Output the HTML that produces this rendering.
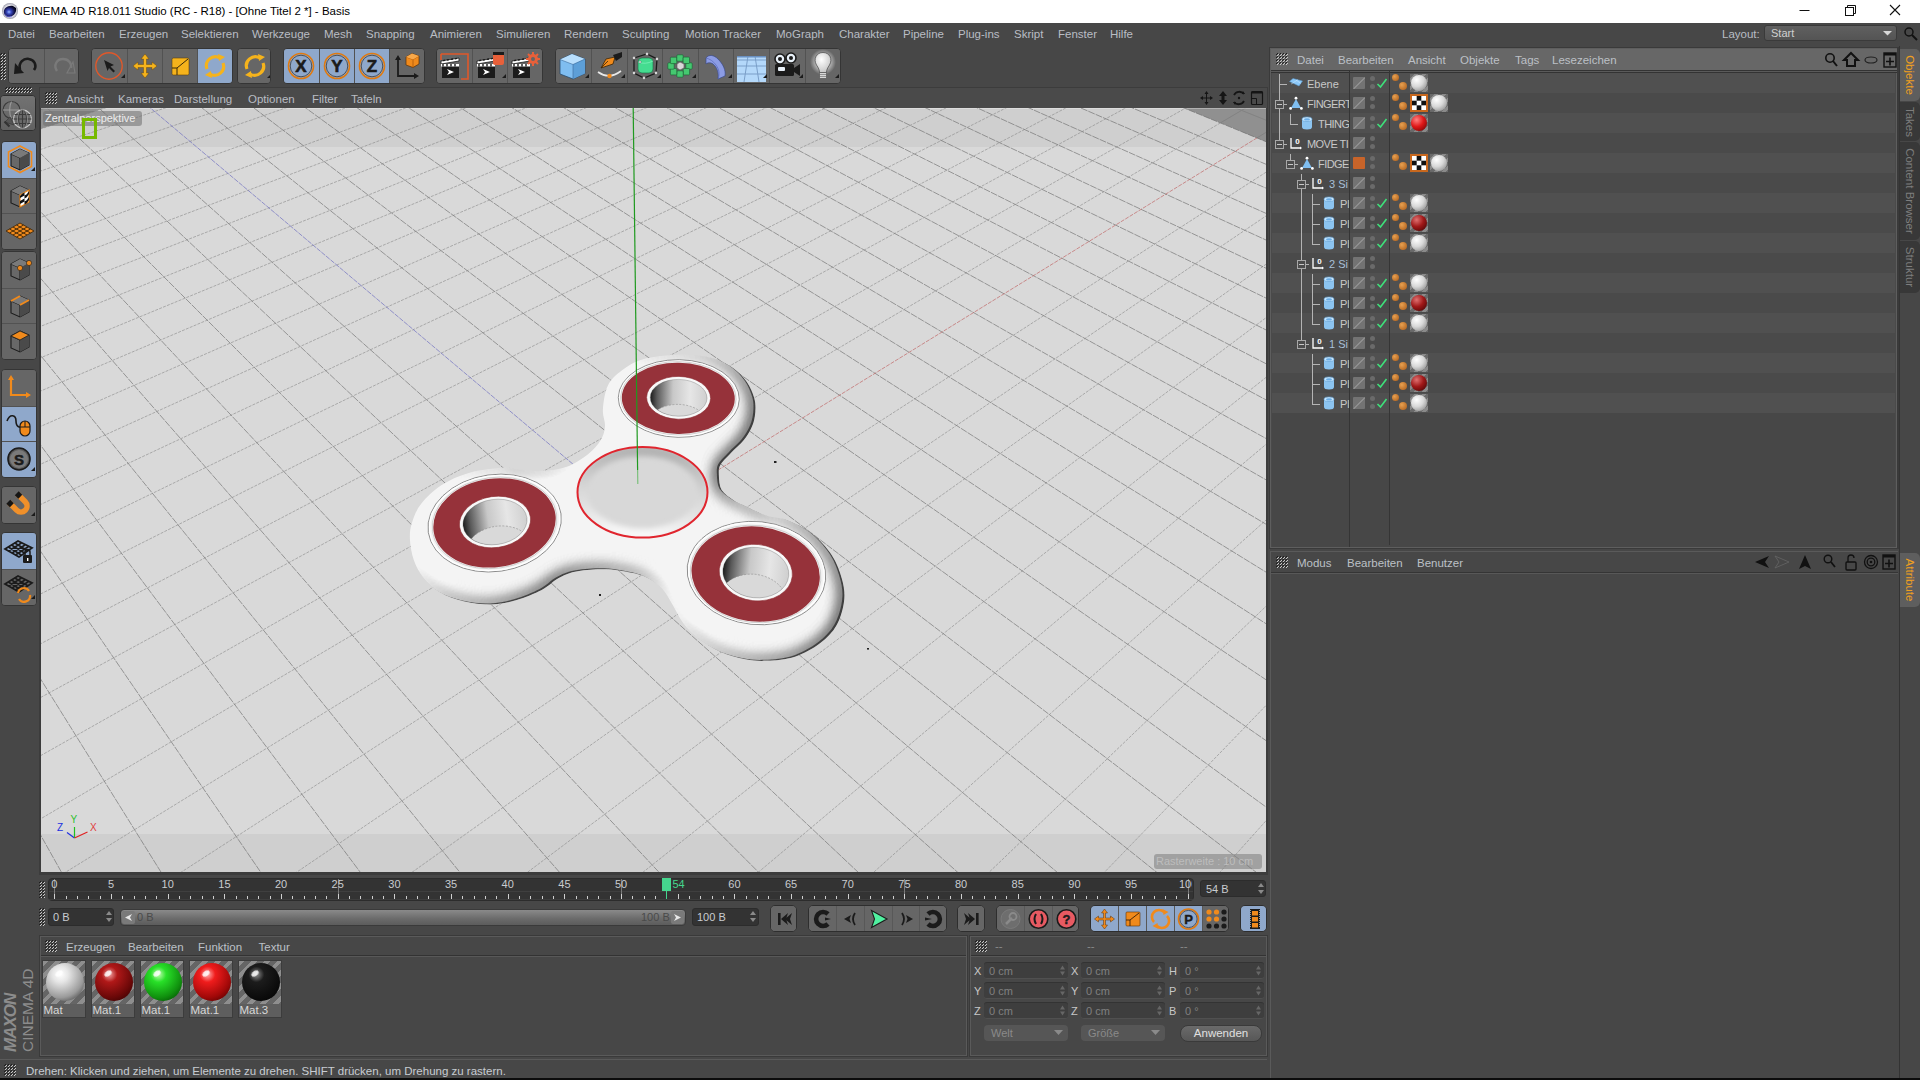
<!DOCTYPE html>
<html><head><meta charset="utf-8">
<style>
*{box-sizing:border-box;margin:0;padding:0}
html,body{width:1920px;height:1080px;overflow:hidden;background:#474747;font-family:"Liberation Sans",sans-serif;font-size:11.5px;color:#b9bdc4}
.a{position:absolute}
.t{position:absolute;white-space:nowrap;line-height:14px}
#title{left:0;top:0;width:1920px;height:23px;background:#fff;color:#000}
#menubar{left:0;top:23px;width:1920px;height:23px;background:#474747}
.hatch{position:absolute;background:repeating-linear-gradient(0deg,transparent 0 2px,#222 2px 3px),repeating-linear-gradient(45deg,#d8d8d8 0 1.1px,#222 1.1px 3px)}
.grp{position:absolute;background:#666;border:1px solid #353535;border-radius:4px;overflow:hidden}
.grp .b{position:absolute;background:#666}
.grp .b.on{background:#8fa8cb}
.grp .b svg{position:absolute;left:0;top:0}
.sep{position:absolute;background:#555}
</style></head><body>
<svg width="0" height="0" style="position:absolute"><defs><pattern id="hp" width="3" height="3" patternUnits="userSpaceOnUse"><rect x="0" y="1" width="1" height="1" fill="#1e1e1e"/><rect x="1" y="0" width="1" height="1" fill="#1e1e1e"/><rect x="1" y="2" width="1" height="1" fill="#c8c8c8"/><rect x="2" y="1" width="1" height="1" fill="#c8c8c8"/></pattern></defs></svg>
<div id="title" class="a">
 <div class="t" style="left:23px;top:4px;color:#000;font-size:11.5px">CINEMA 4D R18.011 Studio (RC - R18) - [Ohne Titel 2 *] - Basis</div>
</div>
<div id="menubar" class="a">
 <div class="t" style="left:8px;top:4px">Datei</div>
 <div class="t" style="left:49px;top:4px">Bearbeiten</div>
 <div class="t" style="left:119px;top:4px">Erzeugen</div>
 <div class="t" style="left:181px;top:4px">Selektieren</div>
 <div class="t" style="left:252px;top:4px">Werkzeuge</div>
 <div class="t" style="left:324px;top:4px">Mesh</div>
 <div class="t" style="left:366px;top:4px">Snapping</div>
 <div class="t" style="left:430px;top:4px">Animieren</div>
 <div class="t" style="left:496px;top:4px">Simulieren</div>
 <div class="t" style="left:564px;top:4px">Rendern</div>
 <div class="t" style="left:622px;top:4px">Sculpting</div>
 <div class="t" style="left:685px;top:4px">Motion Tracker</div>
 <div class="t" style="left:776px;top:4px">MoGraph</div>
 <div class="t" style="left:839px;top:4px">Charakter</div>
 <div class="t" style="left:903px;top:4px">Pipeline</div>
 <div class="t" style="left:958px;top:4px">Plug-ins</div>
 <div class="t" style="left:1014px;top:4px">Skript</div>
 <div class="t" style="left:1058px;top:4px">Fenster</div>
 <div class="t" style="left:1110px;top:4px">Hilfe</div>
 <div class="t" style="left:1722px;top:4px">Layout:</div>
</div>

<svg class="a" style="left:0px;top:53px" width="6" height="27"><rect width="6" height="27" fill="url(#hp)"/></svg><div class="grp" style="left:8.3px;top:48px;width:71.20px;height:36.00px"><div class="b" style="left:0.00px;top:0.00px;width:34.60px;height:34.00px;"><svg width="34" height="34" viewBox="0 0 34 34"><path d="M11,21 C9,13 15,9 20,10 C26,11 28,17 25,21" fill="none" stroke="#1b1b1b" stroke-width="2.6"/><path d="M6,14 L15,24 L5,25Z" fill="#1b1b1b"/></svg></div><div class="b" style="left:34.60px;top:0.00px;width:34.60px;height:34.00px;border-left:1px solid #525252;"><svg width="34" height="34" viewBox="0 0 34 34"><path d="M12,22 C8,16 12,10 18,10 C24,10 27,15 26,19" fill="none" stroke="#7a7a7a" stroke-width="2.4"/><path d="M28,13 L22,24 L30,24Z" fill="none" stroke="#7a7a7a" stroke-width="1.2"/></svg></div></div><div class="grp" style="left:90.75px;top:48px;width:142.25px;height:36.00px"><div class="b" style="left:0.00px;top:0.00px;width:35.06px;height:34.00px;"><svg width="34" height="34" viewBox="0 0 34 34"><circle cx="17" cy="17" r="13.2" fill="none" stroke="#e0582a" stroke-width="1.4"/><path d="M12,11 L22,16 L18.5,17.5 L23,22 L21.5,23.5 L17,19 L15.5,22Z" fill="#1b1b1b"/><path d="M29,29 L33,29 L33,25Z" fill="#1b1b1b"/></svg></div><div class="b" style="left:35.06px;top:0.00px;width:35.06px;height:34.00px;border-left:1px solid #525252;"><svg width="34" height="34" viewBox="0 0 34 34"><path d="M17,5 L21,10 L18.5,10 L18.5,15.5 L24,15.5 L24,13 L29,17 L24,21 L24,18.5 L18.5,18.5 L18.5,24 L21,24 L17,29 L13,24 L15.5,24 L15.5,18.5 L10,18.5 L10,21 L5,17 L10,13 L10,15.5 L15.5,15.5 L15.5,10 L13,10Z" fill="#f5b31c" stroke="#6a4a10" stroke-width="0.5"/></svg></div><div class="b" style="left:70.12px;top:0.00px;width:35.06px;height:34.00px;border-left:1px solid #525252;"><svg width="34" height="34" viewBox="0 0 34 34"><rect x="9" y="9" width="17" height="17" rx="1.5" fill="#f5b31c" stroke="#5a4010" stroke-width="0.6"/><path d="M14,26 L14,19 L9,19 M14,19 L25,10" fill="none" stroke="#3a2a08" stroke-width="1"/></svg></div><div class="b on" style="left:105.19px;top:0.00px;width:35.06px;height:34.00px;border-left:1px solid #525252;"><svg width="34" height="34" viewBox="0 0 34 34"><path d="M9,20 A9,9 0 0 1 22,9" fill="none" stroke="#f5b31c" stroke-width="3.2"/><path d="M25,14 A9,9 0 0 1 12,25" fill="none" stroke="#f5b31c" stroke-width="3.2"/><path d="M20,5 L27,8 L21,12Z" fill="#f5b31c"/><path d="M14,29 L7,26 L13,22Z" fill="#f5b31c"/></svg></div></div><div class="grp" style="left:236.75px;top:48px;width:34.50px;height:36.00px"><div class="b" style="left:0.00px;top:0.00px;width:32.50px;height:34.00px;"><svg width="34" height="34" viewBox="0 0 34 34"><path d="M9,20 A9,9 0 0 1 22,9" fill="none" stroke="#f5b31c" stroke-width="3.2"/><path d="M25,14 A9,9 0 0 1 12,25" fill="none" stroke="#f5b31c" stroke-width="3.2"/><path d="M20,5 L27,8 L21,12Z" fill="#f5b31c"/><path d="M14,29 L7,26 L13,22Z" fill="#f5b31c"/><path d="M29,29 L33,29 L33,25Z" fill="#1b1b1b"/></svg></div></div><div class="grp" style="left:282.5px;top:48px;width:142.50px;height:36.00px"><div class="b on" style="left:0.00px;top:0.00px;width:35.12px;height:34.00px;"><svg width="34" height="34" viewBox="0 0 34 34"><circle cx="17" cy="17" r="12.5" fill="none" stroke="#e07a10" stroke-width="1.6"/><circle cx="17" cy="17" r="10.8" fill="none" stroke="#3a3a3a" stroke-width="0.8"/><text x="17" y="23" style="font-family:Liberation Sans;font-weight:700;font-size:17px" text-anchor="middle" fill="#1b1b1b" stroke="#1b1b1b" stroke-width="0.6">X</text></svg></div><div class="b on" style="left:35.12px;top:0.00px;width:35.12px;height:34.00px;border-left:1px solid #525252;"><svg width="34" height="34" viewBox="0 0 34 34"><circle cx="17" cy="17" r="12.5" fill="none" stroke="#e07a10" stroke-width="1.6"/><circle cx="17" cy="17" r="10.8" fill="none" stroke="#3a3a3a" stroke-width="0.8"/><text x="17" y="23" style="font-family:Liberation Sans;font-weight:700;font-size:17px" text-anchor="middle" fill="#1b1b1b" stroke="#1b1b1b" stroke-width="0.6">Y</text></svg></div><div class="b on" style="left:70.25px;top:0.00px;width:35.12px;height:34.00px;border-left:1px solid #525252;"><svg width="34" height="34" viewBox="0 0 34 34"><circle cx="17" cy="17" r="12.5" fill="none" stroke="#e07a10" stroke-width="1.6"/><circle cx="17" cy="17" r="10.8" fill="none" stroke="#3a3a3a" stroke-width="0.8"/><text x="17" y="23" style="font-family:Liberation Sans;font-weight:700;font-size:17px" text-anchor="middle" fill="#1b1b1b" stroke="#1b1b1b" stroke-width="0.6">Z</text></svg></div><div class="b" style="left:105.38px;top:0.00px;width:35.12px;height:34.00px;border-left:1px solid #525252;"><svg width="34" height="34" viewBox="0 0 34 34"><path d="M8,8 L8,27 L27,27" fill="none" stroke="#1b1b1b" stroke-width="1.8"/><path d="M5,11 L8,6 L11,11Z M24,24 L29,27 L24,30Z" fill="#1b1b1b"/><path d="M16,8 L22,4.5 L29,7 L29,15 L23,18.5 L16,16Z" fill="#f08a1c" stroke="#5a3008" stroke-width="0.7"/><path d="M16,8 L23,10.5 L29,7 M23,10.5 L23,18.5" fill="none" stroke="#a05008" stroke-width="0.7"/><path d="M16,8 L22,4.5 L29,7 L23,10.5Z" fill="#f8a84a"/></svg></div></div><div class="grp" style="left:436px;top:48px;width:107.00px;height:36.00px"><div class="b" style="left:0.00px;top:0.00px;width:35.00px;height:34.00px;"><svg width="34" height="34" viewBox="0 0 34 34"><rect x="5" y="17" width="17" height="12" fill="#1b1b1b"/><path d="M4,12 L22,9 L22,12 L4,15Z" fill="#fff" stroke="#1b1b1b" stroke-width="0.8"/><path d="M6,11.6 l2,-0.4 M10,11 l2,-0.4 M14,10.4 l2,-0.4 M18,9.8 l2,-0.4" stroke="#1b1b1b" stroke-width="1.4"/><rect x="4" y="15" width="18" height="2.5" fill="#fff"/><path d="M6,15 v2.5 M10,15 v2.5 M14,15 v2.5 M18,15 v2.5" stroke="#1b1b1b" stroke-width="1.4"/><path d="M10,20 L17,23 L10,26 L12,23Z" fill="#fff"/><path d="M4,5 L4,11 M4,5 L31,5 L31,30 L24,30" fill="none" stroke="#e0582a" stroke-width="1.6"/><rect x="5" y="6" width="25" height="3" fill="#777" opacity="0"/></svg></div><div class="b" style="left:35.00px;top:0.00px;width:35.00px;height:34.00px;border-left:1px solid #525252;"><svg width="34" height="34" viewBox="0 0 34 34"><rect x="5" y="17" width="17" height="12" fill="#1b1b1b"/><path d="M4,12 L22,9 L22,12 L4,15Z" fill="#fff" stroke="#1b1b1b" stroke-width="0.8"/><path d="M6,11.6 l2,-0.4 M10,11 l2,-0.4 M14,10.4 l2,-0.4 M18,9.8 l2,-0.4" stroke="#1b1b1b" stroke-width="1.4"/><rect x="4" y="15" width="18" height="2.5" fill="#fff"/><path d="M6,15 v2.5 M10,15 v2.5 M14,15 v2.5 M18,15 v2.5" stroke="#1b1b1b" stroke-width="1.4"/><path d="M10,20 L17,23 L10,26 L12,23Z" fill="#fff"/><rect x="20" y="3" width="11" height="13" rx="2" fill="#e8603a"/><rect x="20" y="3" width="11" height="3" fill="#1b1b1b"/><path d="M29,29 L33,29 L33,25Z" fill="#1b1b1b"/></svg></div><div class="b" style="left:70.00px;top:0.00px;width:35.00px;height:34.00px;border-left:1px solid #525252;"><svg width="34" height="34" viewBox="0 0 34 34"><rect x="5" y="17" width="17" height="12" fill="#1b1b1b"/><path d="M4,12 L22,9 L22,12 L4,15Z" fill="#fff" stroke="#1b1b1b" stroke-width="0.8"/><path d="M6,11.6 l2,-0.4 M10,11 l2,-0.4 M14,10.4 l2,-0.4 M18,9.8 l2,-0.4" stroke="#1b1b1b" stroke-width="1.4"/><rect x="4" y="15" width="18" height="2.5" fill="#fff"/><path d="M6,15 v2.5 M10,15 v2.5 M14,15 v2.5 M18,15 v2.5" stroke="#1b1b1b" stroke-width="1.4"/><path d="M10,20 L17,23 L10,26 L12,23Z" fill="#fff"/><circle cx="25" cy="10" r="5" fill="#e8603a"/><circle cx="25" cy="10" r="2.2" fill="#656565"/><path d="M25,3 v14 M18,10 h14 M20,5 l10,10 M30,5 l-10,10" stroke="#e8603a" stroke-width="2"/><circle cx="25" cy="10" r="2" fill="#656565"/></svg></div></div><div class="grp" style="left:554.5px;top:48px;width:286.75px;height:36.00px"><div class="b" style="left:0.00px;top:0.00px;width:35.59px;height:34.00px;"><svg width="34" height="34" viewBox="0 0 34 34"><path d="M4,10.5 L16,5 L29,10 L29,24.5 L17,30 L4,25Z" fill="#7fbdf0" stroke="#2a4a6a" stroke-width="0.8"/><path d="M4,10.5 L17,15.5 L29,10 L16,5Z" fill="#b8defc"/><path d="M17,15.5 L17,30 L29,24.5 L29,10Z" fill="#5d9fd8"/><path d="M4,10.5 L17,15.5 L29,10 M17,15.5 L17,30" fill="none" stroke="#3a6a9a" stroke-width="0.6"/><path d="M29,29 L33,29 L33,25Z" fill="#1b1b1b"/></svg></div><div class="b" style="left:35.59px;top:0.00px;width:35.59px;height:34.00px;border-left:1px solid #525252;"><svg width="34" height="34" viewBox="0 0 34 34"><path d="M6,23 Q17,31 29,22" fill="none" stroke="#e8e8e8" stroke-width="1.6"/><circle cx="17.5" cy="27" r="2.2" fill="#f08a1c"/><path d="M9,19 L14,10 L23,8 L21,15Z" fill="#f08a1c" stroke="#3a2608" stroke-width="0.8"/><path d="M21,6 L30,3 L30,8 L24,12Z" fill="#1b1b1b"/><path d="M9,19 L16,12" stroke="#3a2608" stroke-width="0.8"/><path d="M29,29 L33,29 L33,25Z" fill="#1b1b1b"/></svg></div><div class="b" style="left:71.19px;top:0.00px;width:35.59px;height:34.00px;border-left:1px solid #525252;"><svg width="34" height="34" viewBox="0 0 34 34"><path d="M6,9 L19,5 L29,10 L28,24 L16,29 L6,24Z" fill="none" stroke="#1a1a1a" stroke-width="1.3"/><rect x="10" y="9" width="15" height="15" rx="4" fill="#44dc90" stroke="#1a6a40" stroke-width="0.6"/><path d="M10,13 Q17,16 25,12" fill="none" stroke="#7af0b8" stroke-width="0.8"/><g fill="#fff" stroke="#333" stroke-width="0.4"><circle cx="6" cy="9" r="1.4"/><circle cx="19" cy="5" r="1.4"/><circle cx="29" cy="10" r="1.4"/><circle cx="28" cy="24" r="1.4"/><circle cx="16" cy="29" r="1.4"/><circle cx="6" cy="24" r="1.4"/><circle cx="12" cy="13" r="1.2"/></g><path d="M29,29 L33,29 L33,25Z" fill="#1b1b1b"/></svg></div><div class="b" style="left:106.78px;top:0.00px;width:35.59px;height:34.00px;border-left:1px solid #525252;"><svg width="34" height="34" viewBox="0 0 34 34"><rect x="22.8" y="13.8" width="6.4" height="6.4" rx="1" fill="#45c870" stroke="#1a5a30" stroke-width="0.6"/><rect x="20.2" y="19.5" width="6.4" height="6.4" rx="1" fill="#45c870" stroke="#1a5a30" stroke-width="0.6"/><rect x="13.8" y="21.8" width="6.4" height="6.4" rx="1" fill="#45c870" stroke="#1a5a30" stroke-width="0.6"/><rect x="7.4" y="19.5" width="6.4" height="6.4" rx="1" fill="#45c870" stroke="#1a5a30" stroke-width="0.6"/><rect x="4.8" y="13.8" width="6.4" height="6.4" rx="1" fill="#45c870" stroke="#1a5a30" stroke-width="0.6"/><rect x="7.4" y="8.2" width="6.4" height="6.4" rx="1" fill="#45c870" stroke="#1a5a30" stroke-width="0.6"/><rect x="13.8" y="5.8" width="6.4" height="6.4" rx="1" fill="#45c870" stroke="#1a5a30" stroke-width="0.6"/><rect x="20.1" y="8.1" width="6.4" height="6.4" rx="1" fill="#45c870" stroke="#1a5a30" stroke-width="0.6"/><path d="M14,15 L17,13 L21,15 L21,19 L17,21 L14,19Z" fill="#d8d8d8" stroke="#555" stroke-width="0.6"/><path d="M29,29 L33,29 L33,25Z" fill="#1b1b1b"/></svg></div><div class="b" style="left:142.38px;top:0.00px;width:35.59px;height:34.00px;border-left:1px solid #525252;"><svg width="34" height="34" viewBox="0 0 34 34"><path d="M7,9 C10,5 15,6 19,10 C24,15 27,21 26,27 L19,30 C20,24 18,18 14,15 C11,13 8,14 7,15Z" fill="#8c9ce4" stroke="#3a4a8a" stroke-width="0.7"/><path d="M7,9 C11,10 14,12 17,16 C20,20 21,25 19,30" fill="none" stroke="#5a6ab8" stroke-width="0.7"/><path d="M29,29 L33,29 L33,25Z" fill="#1b1b1b"/></svg></div><div class="b" style="left:177.97px;top:0.00px;width:35.59px;height:34.00px;border-left:1px solid #525252;"><svg width="34" height="34" viewBox="0 0 34 34"><path d="M3,7 L32,7 L32,33 L3,33Z" fill="#b4d8fa"/><g stroke="#7a9ec8" stroke-width="1"><path d="M3,11 L32,11 M3,17 L32,17 M3,25 L32,25 M14,7 L10,33 M21,7 L25,33"/></g><rect x="3" y="7" width="29" height="1.5" fill="#6a90c0"/><path d="M29,29 L33,29 L33,25Z" fill="#1b1b1b"/></svg></div><div class="b" style="left:213.56px;top:0.00px;width:35.59px;height:34.00px;border-left:1px solid #525252;"><svg width="34" height="34" viewBox="0 0 34 34"><circle cx="10" cy="10" r="5" fill="#e8f0f8" stroke="#1b1b1b" stroke-width="1.6"/><circle cx="21" cy="9" r="5" fill="#e8f0f8" stroke="#1b1b1b" stroke-width="1.6"/><circle cx="10" cy="10" r="2" fill="#1b1b1b"/><circle cx="21" cy="9" r="2" fill="#1b1b1b"/><rect x="5" y="15" width="19" height="12" rx="1.5" fill="#1b1b1b"/><path d="M24,19 L30,15 L30,27 L24,23Z" fill="#1b1b1b"/><rect x="8" y="18" width="7" height="4" rx="1" fill="#e8f0f8"/><path d="M29,29 L33,29 L33,25Z" fill="#1b1b1b"/></svg></div><div class="b" style="left:249.16px;top:0.00px;width:35.59px;height:34.00px;border-left:1px solid #525252;"><svg width="34" height="34" viewBox="0 0 34 34"><defs><radialGradient id="bulb" cx="0.4" cy="0.35" r="0.7"><stop offset="0" stop-color="#fff"/><stop offset="1" stop-color="#c4c4c4"/></radialGradient><radialGradient id="glow" cx="0.5" cy="0.5" r="0.5"><stop offset="0.5" stop-color="#fff" stop-opacity="0.6"/><stop offset="1" stop-color="#fff" stop-opacity="0"/></radialGradient></defs><circle cx="17" cy="13" r="13" fill="url(#glow)"/><path d="M10.5,16 C7,10 10.5,3.5 17,3.5 C23.5,3.5 27,10 23.5,16 C21.5,19 20.5,21 20.5,23.5 L13.5,23.5 C13.5,21 12.5,19 10.5,16Z" fill="url(#bulb)" stroke="#444" stroke-width="0.7"/><rect x="13.5" y="23.5" width="7" height="6" rx="1" fill="#d8d8d8" stroke="#444" stroke-width="0.6"/><path d="M13.5,25.5 h7 M13.5,27.5 h7" stroke="#666" stroke-width="0.6"/><path d="M29,29 L33,29 L33,25Z" fill="#1b1b1b"/></svg></div></div><svg class="a" style="left:5px;top:87px" width="27" height="6"><rect width="27" height="6" fill="url(#hp)"/></svg><div class="grp" style="left:0px;top:95px;width:36px;height:36px;background:#6a6a6a;border-color:#2e2e2e"><div class="b" style="left:0;top:0;width:34px;height:34px;background:linear-gradient(#727272,#626262)"><svg width="34" height="34" viewBox="0 0 34 34"><g fill="none" stroke-width="1.1"><circle cx="10.5" cy="14" r="8.5" stroke="#3a3a3a"/><path d="M10.5,5.5 C8,10 8,18 10.5,22.5 M2,14 h17" stroke="#9a9a9a"/></g><path d="M4,26 L9,21 L13,29Z" fill="#555" stroke="#444" stroke-width="1"/><path d="M3.5,25.5 L8.5,30.5" stroke="#333" stroke-width="2.2"/><circle cx="21.5" cy="23" r="9" fill="#6a6a6a" stroke="#c8c8c8" stroke-width="1.3"/><g fill="none" stroke="#3a3a3a" stroke-width="1.1"><ellipse cx="21.5" cy="23" rx="4" ry="9"/><path d="M21.5,14 v18 M12.5,23 h18 M13.5,18.5 h16 M13.5,27.5 h16"/></g><g fill="none" stroke="#b0b0b0" stroke-width="0.5"><ellipse cx="21.5" cy="23" rx="5" ry="9"/></g></svg></div></div><div class="grp" style="left:1px;top:141px;width:36.00px;height:109.10px"><div class="b on" style="left:0.00px;top:0.00px;width:34.00px;height:35.70px;"><svg width="34" height="34" viewBox="0 0 34 34"><path d="M9,12 L18,7 L27,11 L27,23 L18,28 L9,24Z" fill="#686868" stroke="#1b1b1b" stroke-width="1.1"/><path d="M9,12 L18,16 L27,11" fill="none" stroke="#1b1b1b" stroke-width="1.1"/><path d="M18,16 L18,28" stroke="#1b1b1b" stroke-width="1.1"/><path d="M18,16 L27,11 L27,23 L18,28Z" fill="#4a4a4a"/><path d="M9,12 L18,7 L27,11 L18,16Z" fill="#7a7a7a"/><path d="M18,4 L29.5,10 L29.5,24.5 L18,30.5 L6.5,24.5 L6.5,10Z" fill="none" stroke="#f08a1c" stroke-width="1.6"/><path d="M29,29 L33,29 L33,25Z" fill="#1b1b1b"/></svg></div><div class="b" style="left:0.00px;top:35.70px;width:34.00px;height:35.70px;border-top:1px solid #525252;"><svg width="34" height="34" viewBox="0 0 34 34"><path d="M9,12 L18,7 L27,11 L27,23 L18,28 L9,24Z" fill="#686868" stroke="#1b1b1b" stroke-width="1.1"/><path d="M9,12 L18,16 L27,11" fill="none" stroke="#1b1b1b" stroke-width="1.1"/><path d="M18,16 L18,28" stroke="#1b1b1b" stroke-width="1.1"/><path d="M18,16 L27,11 L27,23 L18,28Z" fill="#4a4a4a"/><path d="M9,12 L18,7 L27,11 L18,16Z" fill="#7a7a7a"/><path d="M18,16 L27,11 L27,23 L18,28Z" fill="#fff" stroke="#f08a1c" stroke-width="1.2"/><path d="M20.2,14.8 L22.5,13.5 L22.5,16.5 L20.2,17.8Z M22.5,16.5 L24.8,15.2 L24.8,18.2 L22.5,19.5Z M20.2,20.8 L22.5,19.5 L22.5,22.5 L20.2,23.8Z M22.5,22.5 L24.8,21.2 L24.8,24.2 L22.5,25.5Z M18,17 L20.2,14.8 L20.2,17.8 L18,19Z M24.8,15.2 L27,12 L27,15 L24.8,18.2Z M18,22 L20.2,20.8 L20.2,23.8 L18,25Z M24.8,21.2 L27,18 L27,21 L24.8,24.2Z" fill="#111"/></svg></div><div class="b" style="left:0.00px;top:71.40px;width:34.00px;height:35.70px;border-top:1px solid #525252;"><svg width="34" height="34" viewBox="0 0 34 34"><path d="M4,17 L18,9 L32,17 L18,25Z" fill="#f08a1c" stroke="#3a2206" stroke-width="0.8"/><g stroke="#3a2206" stroke-width="0.9"><path d="M7.5,15 L21.5,23 M11,13 L25,21 M14.5,11 L28.5,19 M7.5,19 L21.5,11 M11,21 L25,13 M14.5,23 L28.5,15"/></g></svg></div></div><div class="grp" style="left:1px;top:251px;width:36.00px;height:109.10px"><div class="b" style="left:0.00px;top:0.00px;width:34.00px;height:35.70px;"><svg width="34" height="34" viewBox="0 0 34 34"><path d="M9,12 L18,7 L27,11 L27,23 L18,28 L9,24Z" fill="#686868" stroke="#1b1b1b" stroke-width="1.1"/><path d="M9,12 L18,16 L27,11" fill="none" stroke="#1b1b1b" stroke-width="1.1"/><path d="M18,16 L18,28" stroke="#1b1b1b" stroke-width="1.1"/><path d="M18,16 L27,11 L27,23 L18,28Z" fill="#4a4a4a"/><path d="M9,12 L18,7 L27,11 L18,16Z" fill="#7a7a7a"/><circle cx="27" cy="11" r="2.6" fill="#f08a1c" stroke="#1b1b1b" stroke-width="0.6"/><circle cx="18" cy="16" r="2.6" fill="#f08a1c" stroke="#1b1b1b" stroke-width="0.6"/></svg></div><div class="b" style="left:0.00px;top:35.70px;width:34.00px;height:35.70px;border-top:1px solid #525252;"><svg width="34" height="34" viewBox="0 0 34 34"><path d="M9,12 L18,7 L27,11 L27,23 L18,28 L9,24Z" fill="#686868" stroke="#1b1b1b" stroke-width="1.1"/><path d="M9,12 L18,16 L27,11" fill="none" stroke="#1b1b1b" stroke-width="1.1"/><path d="M18,16 L18,28" stroke="#1b1b1b" stroke-width="1.1"/><path d="M18,16 L27,11 L27,23 L18,28Z" fill="#4a4a4a"/><path d="M9,12 L18,7 L27,11 L18,16Z" fill="#7a7a7a"/><path d="M9,12 L18,7" stroke="#f08a1c" stroke-width="2"/><path d="M18,16 L27,11" stroke="#f08a1c" stroke-width="2"/></svg></div><div class="b" style="left:0.00px;top:71.40px;width:34.00px;height:35.70px;border-top:1px solid #525252;"><svg width="34" height="34" viewBox="0 0 34 34"><path d="M9,12 L18,7 L27,11 L27,23 L18,28 L9,24Z" fill="#686868" stroke="#1b1b1b" stroke-width="1.1"/><path d="M9,12 L18,16 L27,11" fill="none" stroke="#1b1b1b" stroke-width="1.1"/><path d="M18,16 L18,28" stroke="#1b1b1b" stroke-width="1.1"/><path d="M18,16 L27,11 L27,23 L18,28Z" fill="#4a4a4a"/><path d="M9,12 L18,7 L27,11 L18,16Z" fill="#7a7a7a"/><path d="M9,12 L18,7 L27,11 L18,16Z" fill="#f08a1c" stroke="#1b1b1b" stroke-width="0.8"/></svg></div></div><div class="grp" style="left:1px;top:369px;width:36.00px;height:109.10px"><div class="b" style="left:0.00px;top:0.00px;width:34.00px;height:35.70px;"><svg width="34" height="34" viewBox="0 0 34 34"><path d="M9,7 L9,25 L27,25" fill="none" stroke="#f08a1c" stroke-width="2.2"/><path d="M6,10 L9,5 L12,10Z M24,22 L29,25 L24,28Z" fill="#f08a1c"/></svg></div><div class="b on" style="left:0.00px;top:35.70px;width:34.00px;height:35.70px;border-top:1px solid #525252;"><svg width="34" height="34" viewBox="0 0 34 34"><path d="M5,14 C8,6 14,8 14,14 C14,20 18,22 22,18" fill="none" stroke="#1b1b1b" stroke-width="1.6"/><rect x="18" y="14" width="10" height="15" rx="5" fill="#f08a1c" stroke="#1b1b1b" stroke-width="1.2"/><path d="M18,20 h10 M23,14 v6" stroke="#1b1b1b" stroke-width="1"/></svg></div><div class="b on" style="left:0.00px;top:71.40px;width:34.00px;height:35.70px;border-top:1px solid #525252;"><svg width="34" height="34" viewBox="0 0 34 34"><circle cx="17" cy="17" r="11" fill="#5a5a5a" stroke="#1b1b1b" stroke-width="1.6"/><circle cx="17" cy="17" r="9" fill="#7a7a7a"/><text x="17" y="22.5" style="font-family:Liberation Sans;font-weight:700;font-size:15px" text-anchor="middle" fill="#1b1b1b" stroke="#1b1b1b" stroke-width="0.5">S</text><path d="M29,29 L33,29 L33,25Z" fill="#1b1b1b"/></svg></div></div><div class="grp" style="left:1px;top:486px;width:36.00px;height:38.00px"><div class="b" style="left:0.00px;top:0.00px;width:34.00px;height:36.00px;"><svg width="34" height="34" viewBox="0 0 34 34"><g transform="translate(19,19) rotate(-45)"><path d="M-6,-11 L-6,0 A6,6 0 0 0 6,0 L6,-11" fill="none" stroke="#f0902a" stroke-width="5.5"/><path d="M-6,-12 v5 M6,-12 v5" stroke="#151515" stroke-width="5.5"/></g><path d="M29,29 L33,29 L33,25Z" fill="#1b1b1b"/></svg></div></div><div class="grp" style="left:1px;top:532px;width:36.00px;height:74.00px"><div class="b on" style="left:0.00px;top:0.00px;width:34.00px;height:36.00px;"><svg width="34" height="34" viewBox="0 0 34 34"><path d="M3,16 L16,8 L30,15 L17,24Z" fill="none" stroke="#1b1b1b" stroke-width="1.8"/><g stroke="#1b1b1b" stroke-width="1.5"><path d="M6.3,14 L19.3,22 M9.5,12 L22.5,20 M12.8,10 L26.2,18 M6.5,18 L19.5,10 M10,20 L23,12 M13.5,22 L26.5,13.5"/></g><rect x="21" y="22" width="9" height="8" rx="1" fill="#1b1b1b"/><path d="M23,22 v-3 a2.5,2.5 0 0 1 5,0 v3" fill="none" stroke="#1b1b1b" stroke-width="1.5"/><rect x="25" y="25" width="1.4" height="3" fill="#fff"/></svg></div><div class="b" style="left:0.00px;top:36.00px;width:34.00px;height:36.00px;border-top:1px solid #525252;"><svg width="34" height="34" viewBox="0 0 34 34"><path d="M3,14 L16,6 L30,13 L17,22Z" fill="none" stroke="#1b1b1b" stroke-width="1.8"/><g stroke="#1b1b1b" stroke-width="1.5"><path d="M6.3,12 L19.3,20 M9.5,10 L22.5,18 M12.8,8 L26.2,16 M6.5,16 L19.5,8 M10,18 L23,10 M13.5,20 L26.5,11.5"/></g><path d="M16,23 A6,6 0 0 1 27,21" fill="none" stroke="#f08a1c" stroke-width="2.2"/><path d="M28,25 A6,6 0 0 1 17,29" fill="none" stroke="#f08a1c" stroke-width="2.2"/><path d="M29,29 L33,29 L33,25Z" fill="#1b1b1b"/></svg></div></div><div class="a" style="left:1269px;top:47px;width:630px;height:502px;background:#3a3a3a"></div><div class="a" style="left:1270px;top:48px;width:627px;height:500px;background:#4a4a4a;border:1px solid #5e5e5e"></div><div class="a" style="left:1271px;top:49px;width:626px;height:21px;background:#676767"></div><div class="a" style="left:1271px;top:70px;width:626px;height:1px;background:#333"></div><div class="a" style="left:1271px;top:71px;width:626px;height:1px;background:#5a5a5a"></div><div class="a" style="left:1271px;top:72px;width:626px;height:1px;background:#333"></div><svg class="a" style="left:1276px;top:53px" width="12" height="12"><rect width="12" height="12" fill="url(#hp)"/></svg><div class="t" style="left:1297px;top:53px;color:#bcc0c6">Datei</div><div class="t" style="left:1338px;top:53px;color:#bcc0c6">Bearbeiten</div><div class="t" style="left:1408px;top:53px;color:#bcc0c6">Ansicht</div><div class="t" style="left:1460px;top:53px;color:#bcc0c6">Objekte</div><div class="t" style="left:1515px;top:53px;color:#bcc0c6">Tags</div><div class="t" style="left:1552px;top:53px;color:#bcc0c6">Lesezeichen</div><svg class="a" style="left:1820px;top:50px" width="78" height="20" viewBox="0 0 78 20"><circle cx="10" cy="8" r="4.2" fill="none" stroke="#111" stroke-width="1.6"/><path d="M13,11 L17,16" stroke="#111" stroke-width="2"/><path d="M31,3 L38,10 L35,10 L35,16 L27,16 L27,10 L24,10Z" fill="none" stroke="#111" stroke-width="2"/><ellipse cx="51" cy="10" rx="6" ry="3" fill="none" stroke="#222" stroke-width="1.2"/><rect x="64" y="3" width="12" height="14" fill="none" stroke="#111" stroke-width="1.4"/><rect x="64" y="3" width="12" height="2.5" fill="#111"/><path d="M70,7.5 v8 M66,11.5 h8" stroke="#111" stroke-width="1.6"/></svg><div class="a" style="left:1272px;top:73px;width:623px;height:474px;background:#474747"></div><div class="a" style="left:1272px;top:73px;width:623px;height:20px;background:#505050"></div><div class="a" style="left:1272px;top:93px;width:623px;height:20px;background:#4a4a4a"></div><div class="a" style="left:1272px;top:113px;width:623px;height:20px;background:#505050"></div><div class="a" style="left:1272px;top:133px;width:623px;height:20px;background:#4a4a4a"></div><div class="a" style="left:1272px;top:153px;width:623px;height:20px;background:#505050"></div><div class="a" style="left:1272px;top:173px;width:623px;height:20px;background:#4a4a4a"></div><div class="a" style="left:1272px;top:193px;width:623px;height:20px;background:#505050"></div><div class="a" style="left:1272px;top:213px;width:623px;height:20px;background:#4a4a4a"></div><div class="a" style="left:1272px;top:233px;width:623px;height:20px;background:#505050"></div><div class="a" style="left:1272px;top:253px;width:623px;height:20px;background:#4a4a4a"></div><div class="a" style="left:1272px;top:273px;width:623px;height:20px;background:#505050"></div><div class="a" style="left:1272px;top:293px;width:623px;height:20px;background:#4a4a4a"></div><div class="a" style="left:1272px;top:313px;width:623px;height:20px;background:#505050"></div><div class="a" style="left:1272px;top:333px;width:623px;height:20px;background:#4a4a4a"></div><div class="a" style="left:1272px;top:353px;width:623px;height:20px;background:#505050"></div><div class="a" style="left:1272px;top:373px;width:623px;height:20px;background:#4a4a4a"></div><div class="a" style="left:1272px;top:393px;width:623px;height:20px;background:#505050"></div><div class="a" style="left:1279px;top:74px;width:1px;height:71px;background:#b4b4b4"></div><div class="a" style="left:1279px;top:84px;width:8px;height:1px;background:#b4b4b4"></div><div class="a" style="left:1283px;top:104px;width:4px;height:1px;background:#b4b4b4"></div><div class="a" style="left:1283px;top:144px;width:4px;height:1px;background:#b4b4b4"></div><div class="a" style="left:1290px;top:114px;width:1px;height:11px;background:#b4b4b4"></div><div class="a" style="left:1290px;top:124px;width:8px;height:1px;background:#b4b4b4"></div><div class="a" style="left:1290px;top:154px;width:1px;height:6px;background:#b4b4b4"></div><div class="a" style="left:1294px;top:164px;width:4px;height:1px;background:#b4b4b4"></div><div class="a" style="left:1301px;top:174px;width:1px;height:171px;background:#b4b4b4"></div><div class="a" style="left:1305px;top:184px;width:4px;height:1px;background:#b4b4b4"></div><div class="a" style="left:1305px;top:264px;width:4px;height:1px;background:#b4b4b4"></div><div class="a" style="left:1305px;top:344px;width:4px;height:1px;background:#b4b4b4"></div><div class="a" style="left:1312px;top:194px;width:1px;height:51px;background:#b4b4b4"></div><div class="a" style="left:1312px;top:204px;width:8px;height:1px;background:#b4b4b4"></div><div class="a" style="left:1312px;top:224px;width:8px;height:1px;background:#b4b4b4"></div><div class="a" style="left:1312px;top:244px;width:8px;height:1px;background:#b4b4b4"></div><div class="a" style="left:1312px;top:274px;width:1px;height:51px;background:#b4b4b4"></div><div class="a" style="left:1312px;top:284px;width:8px;height:1px;background:#b4b4b4"></div><div class="a" style="left:1312px;top:304px;width:8px;height:1px;background:#b4b4b4"></div><div class="a" style="left:1312px;top:324px;width:8px;height:1px;background:#b4b4b4"></div><div class="a" style="left:1312px;top:354px;width:1px;height:51px;background:#b4b4b4"></div><div class="a" style="left:1312px;top:364px;width:8px;height:1px;background:#b4b4b4"></div><div class="a" style="left:1312px;top:384px;width:8px;height:1px;background:#b4b4b4"></div><div class="a" style="left:1312px;top:404px;width:8px;height:1px;background:#b4b4b4"></div><div class="a" style="left:1275px;top:100px;width:9px;height:9px;border:1px solid #a8a8a8;background:#4c4c4c"><div class="a" style="left:1px;top:3px;width:5px;height:1px;background:#c8c8c8"></div></div><div class="a" style="left:1275px;top:140px;width:9px;height:9px;border:1px solid #a8a8a8;background:#4c4c4c"><div class="a" style="left:1px;top:3px;width:5px;height:1px;background:#c8c8c8"></div></div><div class="a" style="left:1286px;top:160px;width:9px;height:9px;border:1px solid #a8a8a8;background:#4c4c4c"><div class="a" style="left:1px;top:3px;width:5px;height:1px;background:#c8c8c8"></div></div><div class="a" style="left:1297px;top:180px;width:9px;height:9px;border:1px solid #a8a8a8;background:#4c4c4c"><div class="a" style="left:1px;top:3px;width:5px;height:1px;background:#c8c8c8"></div></div><div class="a" style="left:1297px;top:260px;width:9px;height:9px;border:1px solid #a8a8a8;background:#4c4c4c"><div class="a" style="left:1px;top:3px;width:5px;height:1px;background:#c8c8c8"></div></div><div class="a" style="left:1297px;top:340px;width:9px;height:9px;border:1px solid #a8a8a8;background:#4c4c4c"><div class="a" style="left:1px;top:3px;width:5px;height:1px;background:#c8c8c8"></div></div><div class="a" style="left:1289px;top:76px"><svg width="14" height="14" viewBox="0 0 14 14"><path d="M0.5,5.5 L4,2.5 L13.5,5 L10,10Z" fill="#8cc8f8" stroke="#5a9ad0" stroke-width="0.5"/><path d="M2.2,8 L8.8,3.8 M7,4 L12,7.5" stroke="#c8e6fc" stroke-width="0.6"/></svg></div><div class="a" style="left:1307px;top:77px;width:42px;height:15px;overflow:hidden"><div class="t" style="left:0;top:0;color:#c8c8c8;font-size:11px;letter-spacing:0">Ebene</div></div><div class="a" style="left:1353px;top:77px;width:12px;height:12px;background:#737373;border-radius:1px;overflow:hidden"><div class="a" style="left:-3px;top:5.5px;width:18px;height:1px;background:#9a9a9a;transform:rotate(-45deg)"></div></div><div class="a" style="left:1370px;top:76px;width:5px;height:5px;border-radius:50%;background:#6a6a6a"></div><div class="a" style="left:1370px;top:84px;width:5px;height:5px;border-radius:50%;background:#6a6a6a"></div><svg class="a" style="left:1376px;top:77px" width="12" height="12" viewBox="0 0 12 12"><path d="M1.5,7 L4.5,10 L10.5,2" fill="none" stroke="#3ee07a" stroke-width="1.6"/></svg><div class="a" style="left:1392px;top:74px;width:7px;height:7px;border-radius:50%;background:radial-gradient(circle at 35% 35%,#e8a050,#a85a18)"></div><div class="a" style="left:1398.5px;top:81.5px;width:8px;height:8px;border-radius:50%;background:radial-gradient(circle at 35% 35%,#e8a050,#a85a18)"></div><div class="a" style="left:1410px;top:74px;width:18px;height:18px;background:repeating-linear-gradient(135deg,#6a6a6a 0 3px,#8a8a8a 3px 6px);"><div class="a" style="left:1px;top:1px;width:16px;height:16px;border-radius:50%;background:radial-gradient(circle at 35% 30%,#ffffff 0,#d8d8d8 45%,#7a7a7a 100%)"></div></div><div class="a" style="left:1289px;top:96px"><svg width="14" height="14" viewBox="0 0 14 14"><path d="M7,3 L12,12 L2,12Z" fill="#7fbef0"/><circle cx="7" cy="2.2" r="1.4" fill="#fff"/><circle cx="1.6" cy="12.4" r="1.4" fill="#fff"/><circle cx="12.4" cy="12.4" r="1.4" fill="#fff"/></svg></div><div class="a" style="left:1307px;top:97px;width:42px;height:15px;overflow:hidden"><div class="t" style="left:0;top:0;color:#c8c8c8;font-size:11px;letter-spacing:-0.55px">FINGERT</div></div><div class="a" style="left:1353px;top:97px;width:12px;height:12px;background:#737373;border-radius:1px;overflow:hidden"><div class="a" style="left:-3px;top:5.5px;width:18px;height:1px;background:#9a9a9a;transform:rotate(-45deg)"></div></div><div class="a" style="left:1370px;top:96px;width:5px;height:5px;border-radius:50%;background:#6a6a6a"></div><div class="a" style="left:1370px;top:104px;width:5px;height:5px;border-radius:50%;background:#6a6a6a"></div><div class="a" style="left:1392px;top:94px;width:7px;height:7px;border-radius:50%;background:radial-gradient(circle at 35% 35%,#e8a050,#a85a18)"></div><div class="a" style="left:1398.5px;top:101.5px;width:8px;height:8px;border-radius:50%;background:radial-gradient(circle at 35% 35%,#e8a050,#a85a18)"></div><div class="a" style="left:1410px;top:94px"><div class="a" style="width:18px;height:18px;background:#c8681e"><div class="a" style="left:2px;top:2px;width:14px;height:14px;background:conic-gradient(#111 0 25%,#fff 0 50%,#111 0 75%,#fff 0) 0 0/9.34px 9.34px"></div></div></div><div class="a" style="left:1430px;top:94px;width:18px;height:18px;background:repeating-linear-gradient(135deg,#6a6a6a 0 3px,#8a8a8a 3px 6px);"><div class="a" style="left:1px;top:1px;width:16px;height:16px;border-radius:50%;background:radial-gradient(circle at 35% 30%,#ffffff 0,#d8d8d8 45%,#7a7a7a 100%)"></div></div><div class="a" style="left:1301px;top:116px"><svg width="12" height="14" viewBox="0 0 12 14"><path d="M1,3 L1,11 A5,2.5 0 0 0 11,11 L11,3Z" fill="#8cc4f0"/><ellipse cx="6" cy="3.2" rx="5" ry="2.3" fill="#c8e6fc" stroke="#5a9ad0" stroke-width="0.6"/><ellipse cx="6" cy="3.4" rx="3" ry="1.2" fill="#6aaee8"/></svg></div><div class="a" style="left:1318px;top:117px;width:31px;height:15px;overflow:hidden"><div class="t" style="left:0;top:0;color:#c8c8c8;font-size:11px;letter-spacing:-0.55px">THING</div></div><div class="a" style="left:1353px;top:117px;width:12px;height:12px;background:#737373;border-radius:1px;overflow:hidden"><div class="a" style="left:-3px;top:5.5px;width:18px;height:1px;background:#9a9a9a;transform:rotate(-45deg)"></div></div><div class="a" style="left:1370px;top:116px;width:5px;height:5px;border-radius:50%;background:#6a6a6a"></div><div class="a" style="left:1370px;top:124px;width:5px;height:5px;border-radius:50%;background:#6a6a6a"></div><svg class="a" style="left:1376px;top:117px" width="12" height="12" viewBox="0 0 12 12"><path d="M1.5,7 L4.5,10 L10.5,2" fill="none" stroke="#3ee07a" stroke-width="1.6"/></svg><div class="a" style="left:1392px;top:114px;width:7px;height:7px;border-radius:50%;background:radial-gradient(circle at 35% 35%,#e8a050,#a85a18)"></div><div class="a" style="left:1398.5px;top:121.5px;width:8px;height:8px;border-radius:50%;background:radial-gradient(circle at 35% 35%,#e8a050,#a85a18)"></div><div class="a" style="left:1410px;top:114px;width:18px;height:18px;background:repeating-linear-gradient(135deg,#6a6a6a 0 3px,#8a8a8a 3px 6px);"><div class="a" style="left:1px;top:1px;width:16px;height:16px;border-radius:50%;background:radial-gradient(circle at 35% 30%,#ff8080 0,#e01818 45%,#600000 100%)"></div></div><div class="a" style="left:1289px;top:136px"><svg width="14" height="14" viewBox="0 0 14 14"><path d="M2,2 L2,12 L12,12" fill="none" stroke="#fff" stroke-width="1.3"/><path d="M11,10.5 L13,12 L11,13.5Z" fill="#fff"/><text x="8.5" y="7.5" font-family="Liberation Sans" font-weight="bold" font-size="8" text-anchor="middle" fill="#fff">0</text></svg></div><div class="a" style="left:1307px;top:137px;width:42px;height:15px;overflow:hidden"><div class="t" style="left:0;top:0;color:#c8c8c8;font-size:11px;letter-spacing:-0.55px">MOVE TI</div></div><div class="a" style="left:1353px;top:137px;width:12px;height:12px;background:#737373;border-radius:1px;overflow:hidden"><div class="a" style="left:-3px;top:5.5px;width:18px;height:1px;background:#9a9a9a;transform:rotate(-45deg)"></div></div><div class="a" style="left:1370px;top:136px;width:5px;height:5px;border-radius:50%;background:#6a6a6a"></div><div class="a" style="left:1370px;top:144px;width:5px;height:5px;border-radius:50%;background:#6a6a6a"></div><div class="a" style="left:1300px;top:156px"><svg width="14" height="14" viewBox="0 0 14 14"><path d="M7,3 L12,12 L2,12Z" fill="#7fbef0"/><circle cx="7" cy="2.2" r="1.4" fill="#fff"/><circle cx="1.6" cy="12.4" r="1.4" fill="#fff"/><circle cx="12.4" cy="12.4" r="1.4" fill="#fff"/></svg></div><div class="a" style="left:1318px;top:157px;width:31px;height:15px;overflow:hidden"><div class="t" style="left:0;top:0;color:#c8c8c8;font-size:11px;letter-spacing:-0.55px">FIDGE</div></div><div class="a" style="left:1353px;top:157px;width:12px;height:12px;background:#c8642a;border-radius:1px;overflow:hidden"></div><div class="a" style="left:1370px;top:156px;width:5px;height:5px;border-radius:50%;background:#6a6a6a"></div><div class="a" style="left:1370px;top:164px;width:5px;height:5px;border-radius:50%;background:#6a6a6a"></div><div class="a" style="left:1392px;top:154px;width:7px;height:7px;border-radius:50%;background:radial-gradient(circle at 35% 35%,#e8a050,#a85a18)"></div><div class="a" style="left:1398.5px;top:161.5px;width:8px;height:8px;border-radius:50%;background:radial-gradient(circle at 35% 35%,#e8a050,#a85a18)"></div><div class="a" style="left:1410px;top:154px"><div class="a" style="width:18px;height:18px;background:#c8681e"><div class="a" style="left:2px;top:2px;width:14px;height:14px;background:conic-gradient(#111 0 25%,#fff 0 50%,#111 0 75%,#fff 0) 0 0/9.34px 9.34px"></div></div></div><div class="a" style="left:1430px;top:154px;width:18px;height:18px;background:repeating-linear-gradient(135deg,#6a6a6a 0 3px,#8a8a8a 3px 6px);"><div class="a" style="left:1px;top:1px;width:16px;height:16px;border-radius:50%;background:radial-gradient(circle at 35% 30%,#ffffff 0,#d8d8d8 45%,#7a7a7a 100%)"></div></div><div class="a" style="left:1311px;top:176px"><svg width="14" height="14" viewBox="0 0 14 14"><path d="M2,2 L2,12 L12,12" fill="none" stroke="#fff" stroke-width="1.3"/><path d="M11,10.5 L13,12 L11,13.5Z" fill="#fff"/><text x="8.5" y="7.5" font-family="Liberation Sans" font-weight="bold" font-size="8" text-anchor="middle" fill="#fff">0</text></svg></div><div class="a" style="left:1329px;top:177px;width:20px;height:15px;overflow:hidden"><div class="t" style="left:0;top:0;color:#a9c0d8;font-size:11px;letter-spacing:0">3 Si</div></div><div class="a" style="left:1353px;top:177px;width:12px;height:12px;background:#737373;border-radius:1px;overflow:hidden"><div class="a" style="left:-3px;top:5.5px;width:18px;height:1px;background:#9a9a9a;transform:rotate(-45deg)"></div></div><div class="a" style="left:1370px;top:176px;width:5px;height:5px;border-radius:50%;background:#6a6a6a"></div><div class="a" style="left:1370px;top:184px;width:5px;height:5px;border-radius:50%;background:#6a6a6a"></div><div class="a" style="left:1323px;top:196px"><svg width="12" height="14" viewBox="0 0 12 14"><path d="M1,3 L1,11 A5,2.5 0 0 0 11,11 L11,3Z" fill="#8cc4f0"/><ellipse cx="6" cy="3.2" rx="5" ry="2.3" fill="#c8e6fc" stroke="#5a9ad0" stroke-width="0.6"/><ellipse cx="6" cy="3.4" rx="3" ry="1.2" fill="#6aaee8"/></svg></div><div class="a" style="left:1340px;top:197px;width:9px;height:15px;overflow:hidden"><div class="t" style="left:0;top:0;color:#c8c8c8;font-size:11px;letter-spacing:0">Pl</div></div><div class="a" style="left:1353px;top:197px;width:12px;height:12px;background:#737373;border-radius:1px;overflow:hidden"><div class="a" style="left:-3px;top:5.5px;width:18px;height:1px;background:#9a9a9a;transform:rotate(-45deg)"></div></div><div class="a" style="left:1370px;top:196px;width:5px;height:5px;border-radius:50%;background:#6a6a6a"></div><div class="a" style="left:1370px;top:204px;width:5px;height:5px;border-radius:50%;background:#6a6a6a"></div><svg class="a" style="left:1376px;top:197px" width="12" height="12" viewBox="0 0 12 12"><path d="M1.5,7 L4.5,10 L10.5,2" fill="none" stroke="#3ee07a" stroke-width="1.6"/></svg><div class="a" style="left:1392px;top:194px;width:7px;height:7px;border-radius:50%;background:radial-gradient(circle at 35% 35%,#e8a050,#a85a18)"></div><div class="a" style="left:1398.5px;top:201.5px;width:8px;height:8px;border-radius:50%;background:radial-gradient(circle at 35% 35%,#e8a050,#a85a18)"></div><div class="a" style="left:1410px;top:194px;width:18px;height:18px;background:repeating-linear-gradient(135deg,#6a6a6a 0 3px,#8a8a8a 3px 6px);"><div class="a" style="left:1px;top:1px;width:16px;height:16px;border-radius:50%;background:radial-gradient(circle at 35% 30%,#ffffff 0,#d8d8d8 45%,#7a7a7a 100%)"></div></div><div class="a" style="left:1323px;top:216px"><svg width="12" height="14" viewBox="0 0 12 14"><path d="M1,3 L1,11 A5,2.5 0 0 0 11,11 L11,3Z" fill="#8cc4f0"/><ellipse cx="6" cy="3.2" rx="5" ry="2.3" fill="#c8e6fc" stroke="#5a9ad0" stroke-width="0.6"/><ellipse cx="6" cy="3.4" rx="3" ry="1.2" fill="#6aaee8"/></svg></div><div class="a" style="left:1340px;top:217px;width:9px;height:15px;overflow:hidden"><div class="t" style="left:0;top:0;color:#c8c8c8;font-size:11px;letter-spacing:0">Pl</div></div><div class="a" style="left:1353px;top:217px;width:12px;height:12px;background:#737373;border-radius:1px;overflow:hidden"><div class="a" style="left:-3px;top:5.5px;width:18px;height:1px;background:#9a9a9a;transform:rotate(-45deg)"></div></div><div class="a" style="left:1370px;top:216px;width:5px;height:5px;border-radius:50%;background:#6a6a6a"></div><div class="a" style="left:1370px;top:224px;width:5px;height:5px;border-radius:50%;background:#6a6a6a"></div><svg class="a" style="left:1376px;top:217px" width="12" height="12" viewBox="0 0 12 12"><path d="M1.5,7 L4.5,10 L10.5,2" fill="none" stroke="#3ee07a" stroke-width="1.6"/></svg><div class="a" style="left:1392px;top:214px;width:7px;height:7px;border-radius:50%;background:radial-gradient(circle at 35% 35%,#e8a050,#a85a18)"></div><div class="a" style="left:1398.5px;top:221.5px;width:8px;height:8px;border-radius:50%;background:radial-gradient(circle at 35% 35%,#e8a050,#a85a18)"></div><div class="a" style="left:1410px;top:214px;width:18px;height:18px;background:repeating-linear-gradient(135deg,#6a6a6a 0 3px,#8a8a8a 3px 6px);"><div class="a" style="left:1px;top:1px;width:16px;height:16px;border-radius:50%;background:radial-gradient(circle at 35% 30%,#e07070 0,#a01818 45%,#3a0000 100%)"></div></div><div class="a" style="left:1323px;top:236px"><svg width="12" height="14" viewBox="0 0 12 14"><path d="M1,3 L1,11 A5,2.5 0 0 0 11,11 L11,3Z" fill="#8cc4f0"/><ellipse cx="6" cy="3.2" rx="5" ry="2.3" fill="#c8e6fc" stroke="#5a9ad0" stroke-width="0.6"/><ellipse cx="6" cy="3.4" rx="3" ry="1.2" fill="#6aaee8"/></svg></div><div class="a" style="left:1340px;top:237px;width:9px;height:15px;overflow:hidden"><div class="t" style="left:0;top:0;color:#c8c8c8;font-size:11px;letter-spacing:0">Pl</div></div><div class="a" style="left:1353px;top:237px;width:12px;height:12px;background:#737373;border-radius:1px;overflow:hidden"><div class="a" style="left:-3px;top:5.5px;width:18px;height:1px;background:#9a9a9a;transform:rotate(-45deg)"></div></div><div class="a" style="left:1370px;top:236px;width:5px;height:5px;border-radius:50%;background:#6a6a6a"></div><div class="a" style="left:1370px;top:244px;width:5px;height:5px;border-radius:50%;background:#6a6a6a"></div><svg class="a" style="left:1376px;top:237px" width="12" height="12" viewBox="0 0 12 12"><path d="M1.5,7 L4.5,10 L10.5,2" fill="none" stroke="#3ee07a" stroke-width="1.6"/></svg><div class="a" style="left:1392px;top:234px;width:7px;height:7px;border-radius:50%;background:radial-gradient(circle at 35% 35%,#e8a050,#a85a18)"></div><div class="a" style="left:1398.5px;top:241.5px;width:8px;height:8px;border-radius:50%;background:radial-gradient(circle at 35% 35%,#e8a050,#a85a18)"></div><div class="a" style="left:1410px;top:234px;width:18px;height:18px;background:repeating-linear-gradient(135deg,#6a6a6a 0 3px,#8a8a8a 3px 6px);"><div class="a" style="left:1px;top:1px;width:16px;height:16px;border-radius:50%;background:radial-gradient(circle at 35% 30%,#ffffff 0,#d8d8d8 45%,#7a7a7a 100%)"></div></div><div class="a" style="left:1311px;top:256px"><svg width="14" height="14" viewBox="0 0 14 14"><path d="M2,2 L2,12 L12,12" fill="none" stroke="#fff" stroke-width="1.3"/><path d="M11,10.5 L13,12 L11,13.5Z" fill="#fff"/><text x="8.5" y="7.5" font-family="Liberation Sans" font-weight="bold" font-size="8" text-anchor="middle" fill="#fff">0</text></svg></div><div class="a" style="left:1329px;top:257px;width:20px;height:15px;overflow:hidden"><div class="t" style="left:0;top:0;color:#a9c0d8;font-size:11px;letter-spacing:0">2 Si</div></div><div class="a" style="left:1353px;top:257px;width:12px;height:12px;background:#737373;border-radius:1px;overflow:hidden"><div class="a" style="left:-3px;top:5.5px;width:18px;height:1px;background:#9a9a9a;transform:rotate(-45deg)"></div></div><div class="a" style="left:1370px;top:256px;width:5px;height:5px;border-radius:50%;background:#6a6a6a"></div><div class="a" style="left:1370px;top:264px;width:5px;height:5px;border-radius:50%;background:#6a6a6a"></div><div class="a" style="left:1323px;top:276px"><svg width="12" height="14" viewBox="0 0 12 14"><path d="M1,3 L1,11 A5,2.5 0 0 0 11,11 L11,3Z" fill="#8cc4f0"/><ellipse cx="6" cy="3.2" rx="5" ry="2.3" fill="#c8e6fc" stroke="#5a9ad0" stroke-width="0.6"/><ellipse cx="6" cy="3.4" rx="3" ry="1.2" fill="#6aaee8"/></svg></div><div class="a" style="left:1340px;top:277px;width:9px;height:15px;overflow:hidden"><div class="t" style="left:0;top:0;color:#c8c8c8;font-size:11px;letter-spacing:0">Pl</div></div><div class="a" style="left:1353px;top:277px;width:12px;height:12px;background:#737373;border-radius:1px;overflow:hidden"><div class="a" style="left:-3px;top:5.5px;width:18px;height:1px;background:#9a9a9a;transform:rotate(-45deg)"></div></div><div class="a" style="left:1370px;top:276px;width:5px;height:5px;border-radius:50%;background:#6a6a6a"></div><div class="a" style="left:1370px;top:284px;width:5px;height:5px;border-radius:50%;background:#6a6a6a"></div><svg class="a" style="left:1376px;top:277px" width="12" height="12" viewBox="0 0 12 12"><path d="M1.5,7 L4.5,10 L10.5,2" fill="none" stroke="#3ee07a" stroke-width="1.6"/></svg><div class="a" style="left:1392px;top:274px;width:7px;height:7px;border-radius:50%;background:radial-gradient(circle at 35% 35%,#e8a050,#a85a18)"></div><div class="a" style="left:1398.5px;top:281.5px;width:8px;height:8px;border-radius:50%;background:radial-gradient(circle at 35% 35%,#e8a050,#a85a18)"></div><div class="a" style="left:1410px;top:274px;width:18px;height:18px;background:repeating-linear-gradient(135deg,#6a6a6a 0 3px,#8a8a8a 3px 6px);"><div class="a" style="left:1px;top:1px;width:16px;height:16px;border-radius:50%;background:radial-gradient(circle at 35% 30%,#ffffff 0,#d8d8d8 45%,#7a7a7a 100%)"></div></div><div class="a" style="left:1323px;top:296px"><svg width="12" height="14" viewBox="0 0 12 14"><path d="M1,3 L1,11 A5,2.5 0 0 0 11,11 L11,3Z" fill="#8cc4f0"/><ellipse cx="6" cy="3.2" rx="5" ry="2.3" fill="#c8e6fc" stroke="#5a9ad0" stroke-width="0.6"/><ellipse cx="6" cy="3.4" rx="3" ry="1.2" fill="#6aaee8"/></svg></div><div class="a" style="left:1340px;top:297px;width:9px;height:15px;overflow:hidden"><div class="t" style="left:0;top:0;color:#c8c8c8;font-size:11px;letter-spacing:0">Pl</div></div><div class="a" style="left:1353px;top:297px;width:12px;height:12px;background:#737373;border-radius:1px;overflow:hidden"><div class="a" style="left:-3px;top:5.5px;width:18px;height:1px;background:#9a9a9a;transform:rotate(-45deg)"></div></div><div class="a" style="left:1370px;top:296px;width:5px;height:5px;border-radius:50%;background:#6a6a6a"></div><div class="a" style="left:1370px;top:304px;width:5px;height:5px;border-radius:50%;background:#6a6a6a"></div><svg class="a" style="left:1376px;top:297px" width="12" height="12" viewBox="0 0 12 12"><path d="M1.5,7 L4.5,10 L10.5,2" fill="none" stroke="#3ee07a" stroke-width="1.6"/></svg><div class="a" style="left:1392px;top:294px;width:7px;height:7px;border-radius:50%;background:radial-gradient(circle at 35% 35%,#e8a050,#a85a18)"></div><div class="a" style="left:1398.5px;top:301.5px;width:8px;height:8px;border-radius:50%;background:radial-gradient(circle at 35% 35%,#e8a050,#a85a18)"></div><div class="a" style="left:1410px;top:294px;width:18px;height:18px;background:repeating-linear-gradient(135deg,#6a6a6a 0 3px,#8a8a8a 3px 6px);"><div class="a" style="left:1px;top:1px;width:16px;height:16px;border-radius:50%;background:radial-gradient(circle at 35% 30%,#e07070 0,#a01818 45%,#3a0000 100%)"></div></div><div class="a" style="left:1323px;top:316px"><svg width="12" height="14" viewBox="0 0 12 14"><path d="M1,3 L1,11 A5,2.5 0 0 0 11,11 L11,3Z" fill="#8cc4f0"/><ellipse cx="6" cy="3.2" rx="5" ry="2.3" fill="#c8e6fc" stroke="#5a9ad0" stroke-width="0.6"/><ellipse cx="6" cy="3.4" rx="3" ry="1.2" fill="#6aaee8"/></svg></div><div class="a" style="left:1340px;top:317px;width:9px;height:15px;overflow:hidden"><div class="t" style="left:0;top:0;color:#c8c8c8;font-size:11px;letter-spacing:0">Pl</div></div><div class="a" style="left:1353px;top:317px;width:12px;height:12px;background:#737373;border-radius:1px;overflow:hidden"><div class="a" style="left:-3px;top:5.5px;width:18px;height:1px;background:#9a9a9a;transform:rotate(-45deg)"></div></div><div class="a" style="left:1370px;top:316px;width:5px;height:5px;border-radius:50%;background:#6a6a6a"></div><div class="a" style="left:1370px;top:324px;width:5px;height:5px;border-radius:50%;background:#6a6a6a"></div><svg class="a" style="left:1376px;top:317px" width="12" height="12" viewBox="0 0 12 12"><path d="M1.5,7 L4.5,10 L10.5,2" fill="none" stroke="#3ee07a" stroke-width="1.6"/></svg><div class="a" style="left:1392px;top:314px;width:7px;height:7px;border-radius:50%;background:radial-gradient(circle at 35% 35%,#e8a050,#a85a18)"></div><div class="a" style="left:1398.5px;top:321.5px;width:8px;height:8px;border-radius:50%;background:radial-gradient(circle at 35% 35%,#e8a050,#a85a18)"></div><div class="a" style="left:1410px;top:314px;width:18px;height:18px;background:repeating-linear-gradient(135deg,#6a6a6a 0 3px,#8a8a8a 3px 6px);"><div class="a" style="left:1px;top:1px;width:16px;height:16px;border-radius:50%;background:radial-gradient(circle at 35% 30%,#ffffff 0,#d8d8d8 45%,#7a7a7a 100%)"></div></div><div class="a" style="left:1311px;top:336px"><svg width="14" height="14" viewBox="0 0 14 14"><path d="M2,2 L2,12 L12,12" fill="none" stroke="#fff" stroke-width="1.3"/><path d="M11,10.5 L13,12 L11,13.5Z" fill="#fff"/><text x="8.5" y="7.5" font-family="Liberation Sans" font-weight="bold" font-size="8" text-anchor="middle" fill="#fff">0</text></svg></div><div class="a" style="left:1329px;top:337px;width:20px;height:15px;overflow:hidden"><div class="t" style="left:0;top:0;color:#a9c0d8;font-size:11px;letter-spacing:0">1 Si</div></div><div class="a" style="left:1353px;top:337px;width:12px;height:12px;background:#737373;border-radius:1px;overflow:hidden"><div class="a" style="left:-3px;top:5.5px;width:18px;height:1px;background:#9a9a9a;transform:rotate(-45deg)"></div></div><div class="a" style="left:1370px;top:336px;width:5px;height:5px;border-radius:50%;background:#6a6a6a"></div><div class="a" style="left:1370px;top:344px;width:5px;height:5px;border-radius:50%;background:#6a6a6a"></div><div class="a" style="left:1323px;top:356px"><svg width="12" height="14" viewBox="0 0 12 14"><path d="M1,3 L1,11 A5,2.5 0 0 0 11,11 L11,3Z" fill="#8cc4f0"/><ellipse cx="6" cy="3.2" rx="5" ry="2.3" fill="#c8e6fc" stroke="#5a9ad0" stroke-width="0.6"/><ellipse cx="6" cy="3.4" rx="3" ry="1.2" fill="#6aaee8"/></svg></div><div class="a" style="left:1340px;top:357px;width:9px;height:15px;overflow:hidden"><div class="t" style="left:0;top:0;color:#c8c8c8;font-size:11px;letter-spacing:0">Pl</div></div><div class="a" style="left:1353px;top:357px;width:12px;height:12px;background:#737373;border-radius:1px;overflow:hidden"><div class="a" style="left:-3px;top:5.5px;width:18px;height:1px;background:#9a9a9a;transform:rotate(-45deg)"></div></div><div class="a" style="left:1370px;top:356px;width:5px;height:5px;border-radius:50%;background:#6a6a6a"></div><div class="a" style="left:1370px;top:364px;width:5px;height:5px;border-radius:50%;background:#6a6a6a"></div><svg class="a" style="left:1376px;top:357px" width="12" height="12" viewBox="0 0 12 12"><path d="M1.5,7 L4.5,10 L10.5,2" fill="none" stroke="#3ee07a" stroke-width="1.6"/></svg><div class="a" style="left:1392px;top:354px;width:7px;height:7px;border-radius:50%;background:radial-gradient(circle at 35% 35%,#e8a050,#a85a18)"></div><div class="a" style="left:1398.5px;top:361.5px;width:8px;height:8px;border-radius:50%;background:radial-gradient(circle at 35% 35%,#e8a050,#a85a18)"></div><div class="a" style="left:1410px;top:354px;width:18px;height:18px;background:repeating-linear-gradient(135deg,#6a6a6a 0 3px,#8a8a8a 3px 6px);"><div class="a" style="left:1px;top:1px;width:16px;height:16px;border-radius:50%;background:radial-gradient(circle at 35% 30%,#ffffff 0,#d8d8d8 45%,#7a7a7a 100%)"></div></div><div class="a" style="left:1323px;top:376px"><svg width="12" height="14" viewBox="0 0 12 14"><path d="M1,3 L1,11 A5,2.5 0 0 0 11,11 L11,3Z" fill="#8cc4f0"/><ellipse cx="6" cy="3.2" rx="5" ry="2.3" fill="#c8e6fc" stroke="#5a9ad0" stroke-width="0.6"/><ellipse cx="6" cy="3.4" rx="3" ry="1.2" fill="#6aaee8"/></svg></div><div class="a" style="left:1340px;top:377px;width:9px;height:15px;overflow:hidden"><div class="t" style="left:0;top:0;color:#c8c8c8;font-size:11px;letter-spacing:0">Pl</div></div><div class="a" style="left:1353px;top:377px;width:12px;height:12px;background:#737373;border-radius:1px;overflow:hidden"><div class="a" style="left:-3px;top:5.5px;width:18px;height:1px;background:#9a9a9a;transform:rotate(-45deg)"></div></div><div class="a" style="left:1370px;top:376px;width:5px;height:5px;border-radius:50%;background:#6a6a6a"></div><div class="a" style="left:1370px;top:384px;width:5px;height:5px;border-radius:50%;background:#6a6a6a"></div><svg class="a" style="left:1376px;top:377px" width="12" height="12" viewBox="0 0 12 12"><path d="M1.5,7 L4.5,10 L10.5,2" fill="none" stroke="#3ee07a" stroke-width="1.6"/></svg><div class="a" style="left:1392px;top:374px;width:7px;height:7px;border-radius:50%;background:radial-gradient(circle at 35% 35%,#e8a050,#a85a18)"></div><div class="a" style="left:1398.5px;top:381.5px;width:8px;height:8px;border-radius:50%;background:radial-gradient(circle at 35% 35%,#e8a050,#a85a18)"></div><div class="a" style="left:1410px;top:374px;width:18px;height:18px;background:repeating-linear-gradient(135deg,#6a6a6a 0 3px,#8a8a8a 3px 6px);"><div class="a" style="left:1px;top:1px;width:16px;height:16px;border-radius:50%;background:radial-gradient(circle at 35% 30%,#e07070 0,#a01818 45%,#3a0000 100%)"></div></div><div class="a" style="left:1323px;top:396px"><svg width="12" height="14" viewBox="0 0 12 14"><path d="M1,3 L1,11 A5,2.5 0 0 0 11,11 L11,3Z" fill="#8cc4f0"/><ellipse cx="6" cy="3.2" rx="5" ry="2.3" fill="#c8e6fc" stroke="#5a9ad0" stroke-width="0.6"/><ellipse cx="6" cy="3.4" rx="3" ry="1.2" fill="#6aaee8"/></svg></div><div class="a" style="left:1340px;top:397px;width:9px;height:15px;overflow:hidden"><div class="t" style="left:0;top:0;color:#c8c8c8;font-size:11px;letter-spacing:0">Pl</div></div><div class="a" style="left:1353px;top:397px;width:12px;height:12px;background:#737373;border-radius:1px;overflow:hidden"><div class="a" style="left:-3px;top:5.5px;width:18px;height:1px;background:#9a9a9a;transform:rotate(-45deg)"></div></div><div class="a" style="left:1370px;top:396px;width:5px;height:5px;border-radius:50%;background:#6a6a6a"></div><div class="a" style="left:1370px;top:404px;width:5px;height:5px;border-radius:50%;background:#6a6a6a"></div><svg class="a" style="left:1376px;top:397px" width="12" height="12" viewBox="0 0 12 12"><path d="M1.5,7 L4.5,10 L10.5,2" fill="none" stroke="#3ee07a" stroke-width="1.6"/></svg><div class="a" style="left:1392px;top:394px;width:7px;height:7px;border-radius:50%;background:radial-gradient(circle at 35% 35%,#e8a050,#a85a18)"></div><div class="a" style="left:1398.5px;top:401.5px;width:8px;height:8px;border-radius:50%;background:radial-gradient(circle at 35% 35%,#e8a050,#a85a18)"></div><div class="a" style="left:1410px;top:394px;width:18px;height:18px;background:repeating-linear-gradient(135deg,#6a6a6a 0 3px,#8a8a8a 3px 6px);"><div class="a" style="left:1px;top:1px;width:16px;height:16px;border-radius:50%;background:radial-gradient(circle at 35% 30%,#ffffff 0,#d8d8d8 45%,#7a7a7a 100%)"></div></div><div class="a" style="left:1349px;top:71px;width:1px;height:476px;background:#353535"></div><div class="a" style="left:1389px;top:71px;width:1px;height:474px;background:#353535"></div><div class="a" style="left:1270px;top:551px;width:628px;height:529px;background:#474747;border-left:1px solid #5a5a5a;border-top:1px solid #5a5a5a"></div><div class="a" style="left:1271px;top:572px;width:627px;height:1px;background:#353535"></div><div class="a" style="left:1271px;top:573px;width:627px;height:1px;background:#585858"></div><svg class="a" style="left:1276px;top:556px" width="12" height="12"><rect width="12" height="12" fill="url(#hp)"/></svg><div class="t" style="left:1297px;top:556px;color:#bcc0c6">Modus</div><div class="t" style="left:1347px;top:556px;color:#bcc0c6">Bearbeiten</div><div class="t" style="left:1417px;top:556px;color:#bcc0c6">Benutzer</div><svg class="a" style="left:1750px;top:552px" width="148" height="20" viewBox="0 0 148 20"><path d="M5,10 L19,4 L15,10 L19,16Z" fill="#111"/><path d="M39,10 L25,4 L29,10 L25,16Z" fill="none" stroke="#666" stroke-width="0.8"/><path d="M55,3 L61,17 L55,14 L49,17Z" fill="#111"/><circle cx="78" cy="7" r="3.8" fill="none" stroke="#111" stroke-width="1.4"/><path d="M81,10 L85,15" stroke="#111" stroke-width="1.8"/><rect x="96" y="10" width="10" height="8" rx="1" fill="none" stroke="#111" stroke-width="1.4"/><path d="M98,10 V6 a3,3 0 0 1 6,0" fill="none" stroke="#111" stroke-width="1.3"/><circle cx="121" cy="10" r="6.5" fill="none" stroke="#111" stroke-width="1.3"/><circle cx="121" cy="10" r="3.8" fill="none" stroke="#111" stroke-width="1.3"/><circle cx="121" cy="10" r="1.3" fill="#111"/><rect x="133" y="3" width="12" height="14" fill="none" stroke="#111" stroke-width="1.4"/><rect x="133" y="3" width="12" height="2.5" fill="#111"/><path d="M139,7.5 v8 M135,11.5 h8" stroke="#111" stroke-width="1.6"/></svg><div class="a" style="left:1899px;top:46px;width:21px;height:1034px;background:#474747"></div><div class="a" style="left:1899px;top:46px;width:1px;height:1034px;background:#333"></div><div class="a" style="left:1900px;top:49px;width:20px;height:52px;background:#5e5e5e;border-radius:0 5px 5px 0"><div class="t" style="left:10.0px;top:26.0px;transform:translate(-50%,-50%) rotate(90deg);color:#f0a020;font-size:11.5px">Objekte</div></div><div class="a" style="left:1900px;top:102px;width:20px;height:39px;background:#383838;border-radius:0 5px 5px 0"><div class="t" style="left:10.0px;top:19.5px;transform:translate(-50%,-50%) rotate(90deg);color:#7e7e7e;font-size:11.5px">Takes</div></div><div class="a" style="left:1900px;top:142px;width:20px;height:98px;background:#383838;border-radius:0 5px 5px 0"><div class="t" style="left:10.0px;top:49.0px;transform:translate(-50%,-50%) rotate(90deg);color:#7e7e7e;font-size:11.5px">Content Browser</div></div><div class="a" style="left:1900px;top:241px;width:20px;height:52px;background:#383838;border-radius:0 5px 5px 0"><div class="t" style="left:10.0px;top:26.0px;transform:translate(-50%,-50%) rotate(90deg);color:#7e7e7e;font-size:11.5px">Struktur</div></div><div class="a" style="left:1900px;top:553px;width:20px;height:54px;background:#5e5e5e;border-radius:0 5px 5px 0"><div class="t" style="left:10.0px;top:27.0px;transform:translate(-50%,-50%) rotate(90deg);color:#f0a020;font-size:11.5px">Attribute</div></div><svg class="a" style="left:39px;top:881px" width="6" height="17"><rect width="6" height="17" fill="url(#hp)"/></svg><div class="a" style="left:48px;top:878px;width:1146px;height:23px;background:#333;border-radius:4px;border:1px solid #2c2c2c"></div><div class="a" style="left:49px;top:891px;width:1144px;height:1px;background:#3f3f3f"></div><div class="a" style="left:49px;top:899px;width:1144px;height:1px;background:#3d3d3d"></div><div class="a" style="left:54.4px;top:879px;width:1px;height:20px;background:#7a7a7a"></div><div class="a" style="left:54.4px;top:894px;width:1px;height:5px;background:#d0d0d0"></div><div class="t" style="left:54.4px;top:877px;transform:translateX(-50%);font-size:11px;color:#c9ccd0">0</div><div class="a" style="left:65.7px;top:895.5px;width:1px;height:3.5px;background:#d0d0d0"></div><div class="a" style="left:77.1px;top:895.5px;width:1px;height:3.5px;background:#d0d0d0"></div><div class="a" style="left:88.4px;top:895.5px;width:1px;height:3.5px;background:#d0d0d0"></div><div class="a" style="left:99.7px;top:895.5px;width:1px;height:3.5px;background:#d0d0d0"></div><div class="a" style="left:111.1px;top:894px;width:1px;height:5px;background:#d0d0d0"></div><div class="t" style="left:111.1px;top:877px;transform:translateX(-50%);font-size:11px;color:#c9ccd0">5</div><div class="a" style="left:122.4px;top:895.5px;width:1px;height:3.5px;background:#d0d0d0"></div><div class="a" style="left:133.7px;top:895.5px;width:1px;height:3.5px;background:#d0d0d0"></div><div class="a" style="left:145.1px;top:895.5px;width:1px;height:3.5px;background:#d0d0d0"></div><div class="a" style="left:156.4px;top:895.5px;width:1px;height:3.5px;background:#d0d0d0"></div><div class="a" style="left:167.7px;top:894px;width:1px;height:5px;background:#d0d0d0"></div><div class="t" style="left:167.7px;top:877px;transform:translateX(-50%);font-size:11px;color:#c9ccd0">10</div><div class="a" style="left:179.1px;top:895.5px;width:1px;height:3.5px;background:#d0d0d0"></div><div class="a" style="left:190.4px;top:895.5px;width:1px;height:3.5px;background:#d0d0d0"></div><div class="a" style="left:201.7px;top:895.5px;width:1px;height:3.5px;background:#d0d0d0"></div><div class="a" style="left:213.1px;top:895.5px;width:1px;height:3.5px;background:#d0d0d0"></div><div class="a" style="left:224.4px;top:894px;width:1px;height:5px;background:#d0d0d0"></div><div class="t" style="left:224.4px;top:877px;transform:translateX(-50%);font-size:11px;color:#c9ccd0">15</div><div class="a" style="left:235.7px;top:895.5px;width:1px;height:3.5px;background:#d0d0d0"></div><div class="a" style="left:247.1px;top:895.5px;width:1px;height:3.5px;background:#d0d0d0"></div><div class="a" style="left:258.4px;top:895.5px;width:1px;height:3.5px;background:#d0d0d0"></div><div class="a" style="left:269.7px;top:895.5px;width:1px;height:3.5px;background:#d0d0d0"></div><div class="a" style="left:281.1px;top:894px;width:1px;height:5px;background:#d0d0d0"></div><div class="t" style="left:281.1px;top:877px;transform:translateX(-50%);font-size:11px;color:#c9ccd0">20</div><div class="a" style="left:292.4px;top:895.5px;width:1px;height:3.5px;background:#d0d0d0"></div><div class="a" style="left:303.7px;top:895.5px;width:1px;height:3.5px;background:#d0d0d0"></div><div class="a" style="left:315.1px;top:895.5px;width:1px;height:3.5px;background:#d0d0d0"></div><div class="a" style="left:326.4px;top:895.5px;width:1px;height:3.5px;background:#d0d0d0"></div><div class="a" style="left:337.7px;top:879px;width:1px;height:20px;background:#7a7a7a"></div><div class="a" style="left:337.7px;top:894px;width:1px;height:5px;background:#d0d0d0"></div><div class="t" style="left:337.7px;top:877px;transform:translateX(-50%);font-size:11px;color:#c9ccd0">25</div><div class="a" style="left:349.1px;top:895.5px;width:1px;height:3.5px;background:#d0d0d0"></div><div class="a" style="left:360.4px;top:895.5px;width:1px;height:3.5px;background:#d0d0d0"></div><div class="a" style="left:371.7px;top:895.5px;width:1px;height:3.5px;background:#d0d0d0"></div><div class="a" style="left:383.1px;top:895.5px;width:1px;height:3.5px;background:#d0d0d0"></div><div class="a" style="left:394.4px;top:894px;width:1px;height:5px;background:#d0d0d0"></div><div class="t" style="left:394.4px;top:877px;transform:translateX(-50%);font-size:11px;color:#c9ccd0">30</div><div class="a" style="left:405.7px;top:895.5px;width:1px;height:3.5px;background:#d0d0d0"></div><div class="a" style="left:417.1px;top:895.5px;width:1px;height:3.5px;background:#d0d0d0"></div><div class="a" style="left:428.4px;top:895.5px;width:1px;height:3.5px;background:#d0d0d0"></div><div class="a" style="left:439.7px;top:895.5px;width:1px;height:3.5px;background:#d0d0d0"></div><div class="a" style="left:451.1px;top:894px;width:1px;height:5px;background:#d0d0d0"></div><div class="t" style="left:451.1px;top:877px;transform:translateX(-50%);font-size:11px;color:#c9ccd0">35</div><div class="a" style="left:462.4px;top:895.5px;width:1px;height:3.5px;background:#d0d0d0"></div><div class="a" style="left:473.7px;top:895.5px;width:1px;height:3.5px;background:#d0d0d0"></div><div class="a" style="left:485.1px;top:895.5px;width:1px;height:3.5px;background:#d0d0d0"></div><div class="a" style="left:496.4px;top:895.5px;width:1px;height:3.5px;background:#d0d0d0"></div><div class="a" style="left:507.7px;top:894px;width:1px;height:5px;background:#d0d0d0"></div><div class="t" style="left:507.7px;top:877px;transform:translateX(-50%);font-size:11px;color:#c9ccd0">40</div><div class="a" style="left:519.1px;top:895.5px;width:1px;height:3.5px;background:#d0d0d0"></div><div class="a" style="left:530.4px;top:895.5px;width:1px;height:3.5px;background:#d0d0d0"></div><div class="a" style="left:541.7px;top:895.5px;width:1px;height:3.5px;background:#d0d0d0"></div><div class="a" style="left:553.1px;top:895.5px;width:1px;height:3.5px;background:#d0d0d0"></div><div class="a" style="left:564.4px;top:894px;width:1px;height:5px;background:#d0d0d0"></div><div class="t" style="left:564.4px;top:877px;transform:translateX(-50%);font-size:11px;color:#c9ccd0">45</div><div class="a" style="left:575.7px;top:895.5px;width:1px;height:3.5px;background:#d0d0d0"></div><div class="a" style="left:587.1px;top:895.5px;width:1px;height:3.5px;background:#d0d0d0"></div><div class="a" style="left:598.4px;top:895.5px;width:1px;height:3.5px;background:#d0d0d0"></div><div class="a" style="left:609.7px;top:895.5px;width:1px;height:3.5px;background:#d0d0d0"></div><div class="a" style="left:621.0px;top:879px;width:1px;height:20px;background:#7a7a7a"></div><div class="a" style="left:621.0px;top:894px;width:1px;height:5px;background:#d0d0d0"></div><div class="t" style="left:621.0px;top:877px;transform:translateX(-50%);font-size:11px;color:#c9ccd0">50</div><div class="a" style="left:632.4px;top:895.5px;width:1px;height:3.5px;background:#d0d0d0"></div><div class="a" style="left:643.7px;top:895.5px;width:1px;height:3.5px;background:#d0d0d0"></div><div class="a" style="left:655.0px;top:895.5px;width:1px;height:3.5px;background:#d0d0d0"></div><div class="a" style="left:666.4px;top:895.5px;width:1px;height:3.5px;background:#d0d0d0"></div><div class="a" style="left:677.7px;top:894px;width:1px;height:5px;background:#d0d0d0"></div><div class="a" style="left:689.0px;top:895.5px;width:1px;height:3.5px;background:#d0d0d0"></div><div class="a" style="left:700.4px;top:895.5px;width:1px;height:3.5px;background:#d0d0d0"></div><div class="a" style="left:711.7px;top:895.5px;width:1px;height:3.5px;background:#d0d0d0"></div><div class="a" style="left:723.0px;top:895.5px;width:1px;height:3.5px;background:#d0d0d0"></div><div class="a" style="left:734.4px;top:894px;width:1px;height:5px;background:#d0d0d0"></div><div class="t" style="left:734.4px;top:877px;transform:translateX(-50%);font-size:11px;color:#c9ccd0">60</div><div class="a" style="left:745.7px;top:895.5px;width:1px;height:3.5px;background:#d0d0d0"></div><div class="a" style="left:757.0px;top:895.5px;width:1px;height:3.5px;background:#d0d0d0"></div><div class="a" style="left:768.4px;top:895.5px;width:1px;height:3.5px;background:#d0d0d0"></div><div class="a" style="left:779.7px;top:895.5px;width:1px;height:3.5px;background:#d0d0d0"></div><div class="a" style="left:791.0px;top:894px;width:1px;height:5px;background:#d0d0d0"></div><div class="t" style="left:791.0px;top:877px;transform:translateX(-50%);font-size:11px;color:#c9ccd0">65</div><div class="a" style="left:802.4px;top:895.5px;width:1px;height:3.5px;background:#d0d0d0"></div><div class="a" style="left:813.7px;top:895.5px;width:1px;height:3.5px;background:#d0d0d0"></div><div class="a" style="left:825.0px;top:895.5px;width:1px;height:3.5px;background:#d0d0d0"></div><div class="a" style="left:836.4px;top:895.5px;width:1px;height:3.5px;background:#d0d0d0"></div><div class="a" style="left:847.7px;top:894px;width:1px;height:5px;background:#d0d0d0"></div><div class="t" style="left:847.7px;top:877px;transform:translateX(-50%);font-size:11px;color:#c9ccd0">70</div><div class="a" style="left:859.0px;top:895.5px;width:1px;height:3.5px;background:#d0d0d0"></div><div class="a" style="left:870.4px;top:895.5px;width:1px;height:3.5px;background:#d0d0d0"></div><div class="a" style="left:881.7px;top:895.5px;width:1px;height:3.5px;background:#d0d0d0"></div><div class="a" style="left:893.0px;top:895.5px;width:1px;height:3.5px;background:#d0d0d0"></div><div class="a" style="left:904.4px;top:879px;width:1px;height:20px;background:#7a7a7a"></div><div class="a" style="left:904.4px;top:894px;width:1px;height:5px;background:#d0d0d0"></div><div class="t" style="left:904.4px;top:877px;transform:translateX(-50%);font-size:11px;color:#c9ccd0">75</div><div class="a" style="left:915.7px;top:895.5px;width:1px;height:3.5px;background:#d0d0d0"></div><div class="a" style="left:927.0px;top:895.5px;width:1px;height:3.5px;background:#d0d0d0"></div><div class="a" style="left:938.4px;top:895.5px;width:1px;height:3.5px;background:#d0d0d0"></div><div class="a" style="left:949.7px;top:895.5px;width:1px;height:3.5px;background:#d0d0d0"></div><div class="a" style="left:961.0px;top:894px;width:1px;height:5px;background:#d0d0d0"></div><div class="t" style="left:961.0px;top:877px;transform:translateX(-50%);font-size:11px;color:#c9ccd0">80</div><div class="a" style="left:972.4px;top:895.5px;width:1px;height:3.5px;background:#d0d0d0"></div><div class="a" style="left:983.7px;top:895.5px;width:1px;height:3.5px;background:#d0d0d0"></div><div class="a" style="left:995.0px;top:895.5px;width:1px;height:3.5px;background:#d0d0d0"></div><div class="a" style="left:1006.4px;top:895.5px;width:1px;height:3.5px;background:#d0d0d0"></div><div class="a" style="left:1017.7px;top:894px;width:1px;height:5px;background:#d0d0d0"></div><div class="t" style="left:1017.7px;top:877px;transform:translateX(-50%);font-size:11px;color:#c9ccd0">85</div><div class="a" style="left:1029.0px;top:895.5px;width:1px;height:3.5px;background:#d0d0d0"></div><div class="a" style="left:1040.4px;top:895.5px;width:1px;height:3.5px;background:#d0d0d0"></div><div class="a" style="left:1051.7px;top:895.5px;width:1px;height:3.5px;background:#d0d0d0"></div><div class="a" style="left:1063.0px;top:895.5px;width:1px;height:3.5px;background:#d0d0d0"></div><div class="a" style="left:1074.4px;top:894px;width:1px;height:5px;background:#d0d0d0"></div><div class="t" style="left:1074.4px;top:877px;transform:translateX(-50%);font-size:11px;color:#c9ccd0">90</div><div class="a" style="left:1085.7px;top:895.5px;width:1px;height:3.5px;background:#d0d0d0"></div><div class="a" style="left:1097.0px;top:895.5px;width:1px;height:3.5px;background:#d0d0d0"></div><div class="a" style="left:1108.4px;top:895.5px;width:1px;height:3.5px;background:#d0d0d0"></div><div class="a" style="left:1119.7px;top:895.5px;width:1px;height:3.5px;background:#d0d0d0"></div><div class="a" style="left:1131.0px;top:894px;width:1px;height:5px;background:#d0d0d0"></div><div class="t" style="left:1131.0px;top:877px;transform:translateX(-50%);font-size:11px;color:#c9ccd0">95</div><div class="a" style="left:1142.4px;top:895.5px;width:1px;height:3.5px;background:#d0d0d0"></div><div class="a" style="left:1153.7px;top:895.5px;width:1px;height:3.5px;background:#d0d0d0"></div><div class="a" style="left:1165.0px;top:895.5px;width:1px;height:3.5px;background:#d0d0d0"></div><div class="a" style="left:1176.4px;top:895.5px;width:1px;height:3.5px;background:#d0d0d0"></div><div class="a" style="left:1187.7px;top:879px;width:1px;height:20px;background:#7a7a7a"></div><div class="a" style="left:1187.7px;top:894px;width:1px;height:5px;background:#d0d0d0"></div><div class="a" style="left:1179px;top:877px;width:13px;height:14px;overflow:hidden"><div class="t" style="left:0;top:0;font-size:11px;color:#c9ccd0">100</div></div><div class="a" style="left:661.9px;top:878px;width:9px;height:13px;background:#45d68e"></div><div class="a" style="left:666.4px;top:891px;width:1px;height:8px;background:#45d68e"></div><div class="t" style="left:672.4px;top:877px;font-size:11px;color:#45d68e">54</div><div class="a" style="left:1200px;top:880px;width:66px;height:17px;background:#333;border-radius:3px;border:1px solid #2c2c2c"></div><div class="t" style="left:1206px;top:882px;font-size:11px;color:#c9ccd0">54 B</div><svg class="a" style="left:1257px;top:882px" width="8" height="13" viewBox="0 0 8 13"><path d="M1,5 L4,1 L7,5Z M1,8 L4,12 L7,8Z" fill="#8a8a8a"/></svg><svg class="a" style="left:39px;top:908px" width="6" height="18"><rect width="6" height="18" fill="url(#hp)"/></svg><div class="a" style="left:48px;top:908px;width:66px;height:18px;background:#333;border-radius:3px;border:1px solid #2c2c2c"></div><div class="t" style="left:53px;top:910px;font-size:11px;color:#c9ccd0">0 B</div><svg class="a" style="left:105px;top:910px" width="8" height="13" viewBox="0 0 8 13"><path d="M1,5 L4,1 L7,5Z M1,8 L4,12 L7,8Z" fill="#8a8a8a"/></svg><div class="a" style="left:120px;top:909px;width:566px;height:17px;border-radius:4px;background:linear-gradient(#8a8a8a,#6a6a6a 60%,#5c5c5c);border:1px solid #3a3a3a"></div><div class="a" style="left:122px;top:911px;width:13px;height:13px;background:#7a7a7a;border-radius:2px"></div><svg class="a" style="left:124px;top:913px" width="9" height="9" viewBox="0 0 9 9"><path d="M1,4.5 L8,1 L6,4.5 L8,8Z" fill="#e8e8e8"/></svg><div class="t" style="left:137px;top:910px;font-size:11px;color:#4a4a4a">0 B</div><div class="t" style="left:641px;top:910px;font-size:11px;color:#4a4a4a">100 B</div><div class="a" style="left:671px;top:911px;width:13px;height:13px;background:#7a7a7a;border-radius:2px"></div><svg class="a" style="left:673px;top:913px" width="9" height="9" viewBox="0 0 9 9"><path d="M8,4.5 L1,1 L3,4.5 L1,8Z" fill="#e8e8e8"/></svg><div class="a" style="left:692px;top:908px;width:67px;height:18px;background:#333;border-radius:3px;border:1px solid #2c2c2c"></div><div class="t" style="left:697px;top:910px;font-size:11px;color:#c9ccd0">100 B</div><svg class="a" style="left:749px;top:910px" width="8" height="13" viewBox="0 0 8 13"><path d="M1,5 L4,1 L7,5Z M1,8 L4,12 L7,8Z" fill="#8a8a8a"/></svg><div class="grp" style="left:769.5px;top:905px;width:27.7px;height:27px;border-radius:5px;border-color:#2e2e2e"><div class="b" style="left:0.0px;top:0;width:26.7px;height:26px;"><svg width="27" height="26" viewBox="0 0 27 26"><rect x="7" y="7" width="2.6" height="12" fill="#1b1b1b"/><path d="M10,13 L17,7 L15,13 L17,19Z M14,13 L21,7 L19,13 L21,19Z" fill="#1b1b1b"/></svg></div></div><div class="grp" style="left:807.5px;top:905px;width:139.5px;height:27px;border-radius:5px;border-color:#2e2e2e"><div class="b" style="left:0.0px;top:0;width:27.7px;height:26px;"><svg width="27" height="26" viewBox="0 0 27 26"><path d="M13,13 A7,7 0 1 1 13,13.1" fill="none"/><path d="M19,8 A7,7 0 1 0 19,18" fill="none" stroke="#1b1b1b" stroke-width="4.6"/><path d="M16,11.5 L22,13 L16,14.5Z" fill="#1b1b1b"/></svg></div><div class="b" style="left:27.7px;top:0;width:27.7px;height:26px;border-left:1px solid #585858;"><svg width="27" height="26" viewBox="0 0 27 26"><path d="M7,13 L14,9 L12.5,13 L14,17Z" fill="#1b1b1b"/><path d="M18,7 Q14,13 18,19" fill="none" stroke="#1b1b1b" stroke-width="1.8"/></svg></div><div class="b" style="left:55.4px;top:0;width:27.7px;height:26px;border-left:1px solid #585858;"><svg width="27" height="26" viewBox="0 0 27 26"><path d="M6.5,4.5 L22,13 L6.5,21.5 L9.5,13Z" fill="#50f0a0" stroke="#1b1b1b" stroke-width="1.1"/></svg></div><div class="b" style="left:83.1px;top:0;width:27.7px;height:26px;border-left:1px solid #585858;"><svg width="27" height="26" viewBox="0 0 27 26"><path d="M20,13 L13,9 L14.5,13 L13,17Z" fill="#1b1b1b"/><path d="M9,7 Q13,13 9,19" fill="none" stroke="#1b1b1b" stroke-width="1.8"/></svg></div><div class="b" style="left:110.8px;top:0;width:27.7px;height:26px;border-left:1px solid #585858;"><svg width="27" height="26" viewBox="0 0 27 26"><path d="M8,8 A7,7 0 1 1 8,18" fill="none" stroke="#1b1b1b" stroke-width="4.6"/><path d="M5,11.5 L12,13 L5,14.5Z" fill="#1b1b1b"/></svg></div></div><div class="grp" style="left:957.3px;top:905px;width:28.0px;height:27px;border-radius:5px;border-color:#2e2e2e"><div class="b" style="left:0.0px;top:0;width:27.0px;height:26px;"><svg width="27" height="26" viewBox="0 0 27 26"><rect x="18" y="7" width="2.6" height="12" fill="#1b1b1b"/><path d="M17,13 L10,7 L12,13 L10,19Z M13,13 L6,7 L8,13 L6,19Z" fill="#1b1b1b"/></svg></div></div><div class="grp" style="left:995.5px;top:905px;width:83.5px;height:27px;border-radius:5px;border-color:#2e2e2e"><div class="b" style="left:0.0px;top:0;width:27.5px;height:26px;"><svg width="27" height="26" viewBox="0 0 27 26"><circle cx="13.5" cy="13" r="9.5" fill="#6e6e6e" stroke="#7a7a7a" stroke-width="1"/><path d="M9,18 L15,12" stroke="#8a8a8a" stroke-width="2.5"/><circle cx="16" cy="10.5" r="3.5" fill="none" stroke="#8a8a8a" stroke-width="1.8"/></svg></div><div class="b" style="left:27.5px;top:0;width:27.5px;height:26px;border-left:1px solid #585858;"><svg width="27" height="26" viewBox="0 0 27 26"><circle cx="13.5" cy="13" r="9.3" fill="#e85a62" stroke="#1b1b1b" stroke-width="1.6"/><path d="M11,8 Q8,13 11,18 M16,8 Q19,13 16,18" fill="none" stroke="#1b1b1b" stroke-width="2"/></svg></div><div class="b" style="left:55.0px;top:0;width:27.5px;height:26px;border-left:1px solid #585858;"><svg width="27" height="26" viewBox="0 0 27 26"><circle cx="13.5" cy="13" r="9.3" fill="#e85a62" stroke="#1b1b1b" stroke-width="1.6"/><text x="13.5" y="18" style="font-family:Liberation Sans;font-weight:700;font-size:13px" text-anchor="middle" fill="#1b1b1b" stroke="#1b1b1b" stroke-width="0.4">?</text></svg></div></div><div class="grp" style="left:1089.8px;top:905px;width:139.5px;height:27px;border-radius:5px;border-color:#2e2e2e"><div class="b on" style="left:0.0px;top:0;width:27.7px;height:26px;"><svg width="27" height="26" viewBox="0 0 27 26"><path d="M13.5,3 L16.5,7 L14.5,7 L14.5,12 L19.5,12 L19.5,10 L23.5,13 L19.5,16 L19.5,14 L14.5,14 L14.5,19 L16.5,19 L13.5,23 L10.5,19 L12.5,19 L12.5,14 L7.5,14 L7.5,16 L3.5,13 L7.5,10 L7.5,12 L12.5,12 L12.5,7 L10.5,7Z" fill="#f08a1c" stroke="#5a3008" stroke-width="0.5"/></svg></div><div class="b on" style="left:27.7px;top:0;width:27.7px;height:26px;border-left:1px solid #585858;"><svg width="27" height="26" viewBox="0 0 27 26"><rect x="7" y="6" width="14" height="14" rx="1" fill="#f08a1c" stroke="#5a3008" stroke-width="0.6"/><path d="M11,20 L11,14 L7,14 M11,14 L20,7" fill="none" stroke="#3a2008" stroke-width="0.9"/></svg></div><div class="b on" style="left:55.4px;top:0;width:27.7px;height:26px;border-left:1px solid #585858;"><svg width="27" height="26" viewBox="0 0 27 26"><path d="M7,16 A7,7 0 0 1 17,6" fill="none" stroke="#f08a1c" stroke-width="2.6"/><path d="M20,10 A7,7 0 0 1 10,20" fill="none" stroke="#f08a1c" stroke-width="2.6"/><path d="M15.5,3 L21.5,6 L16.5,9Z M11.5,23 L5.5,20 L10.5,17Z" fill="#f08a1c"/></svg></div><div class="b on" style="left:83.1px;top:0;width:27.7px;height:26px;border-left:1px solid #585858;"><svg width="27" height="26" viewBox="0 0 27 26"><circle cx="13.5" cy="13" r="10" fill="none" stroke="#e07a10" stroke-width="1.6"/><circle cx="13.5" cy="13" r="8.6" fill="none" stroke="#333" stroke-width="0.7"/><text x="13.5" y="18" style="font-family:Liberation Sans;font-weight:700;font-size:13px" text-anchor="middle" fill="#1b1b1b" stroke="#1b1b1b" stroke-width="0.4">P</text></svg></div><div class="b" style="left:110.8px;top:0;width:27.7px;height:26px;border-left:1px solid #585858;"><svg width="27" height="26" viewBox="0 0 27 26"><circle cx="6.0" cy="6" r="2.6" fill="#f08a1c"/><circle cx="6.0" cy="13" r="2.6" fill="#f08a1c"/><circle cx="6.0" cy="20" r="2.6" fill="#1b1b1b"/><circle cx="13.5" cy="6" r="2.6" fill="#f08a1c"/><circle cx="13.5" cy="13" r="2.6" fill="#f08a1c"/><circle cx="13.5" cy="20" r="2.6" fill="#1b1b1b"/><circle cx="21.0" cy="6" r="2.6" fill="#1b1b1b"/><circle cx="21.0" cy="13" r="2.6" fill="#1b1b1b"/><circle cx="21.0" cy="20" r="2.6" fill="#1b1b1b"/></svg></div></div><div class="grp" style="left:1239.5px;top:905px;width:27.5px;height:27px;border-radius:5px;border-color:#2e2e2e"><div class="b on" style="left:0.0px;top:0;width:26.5px;height:26px;"><svg width="27" height="26" viewBox="0 0 27 26"><rect x="9" y="3" width="10" height="20" fill="#1b1b1b"/><rect x="11" y="5" width="6" height="4.5" fill="#f08a1c"/><rect x="11" y="11" width="6" height="4.5" fill="#f08a1c"/><rect x="11" y="17" width="6" height="4.5" fill="#f08a1c"/><path d="M9.5,4 v18 M18.5,4 v18" stroke="#bbb" stroke-width="0.8" stroke-dasharray="1 1"/><path d="M23,25 L27,25 L27,21Z" fill="#1b1b1b"/></svg></div></div><div class="a" style="left:39px;top:935px;width:929px;height:122px;background:#3a3a3a"></div><div class="a" style="left:40px;top:936px;width:927px;height:120px;background:#474747;border:1px solid #5a5a5a"></div><div class="a" style="left:41px;top:955px;width:925px;height:1px;background:#333"></div><div class="a" style="left:41px;top:956px;width:925px;height:1px;background:#585858"></div><svg class="a" style="left:45px;top:940px" width="12" height="12"><rect width="12" height="12" fill="url(#hp)"/></svg><div class="t" style="left:66px;top:940px;color:#bcc0c6">Erzeugen</div><div class="t" style="left:128px;top:940px;color:#bcc0c6">Bearbeiten</div><div class="t" style="left:198px;top:940px;color:#bcc0c6">Funktion</div><div class="t" style="left:258.5px;top:940px;color:#bcc0c6">Textur</div><div class="a" style="left:41.5px;top:959.5px;width:44px;height:58px;background:#5e5e5e;border:1px solid #3c3c3c"><div class="a" style="left:0;top:0;width:42px;height:43px;background:repeating-linear-gradient(135deg,#8e8e8e 0 4px,#656565 4px 9px)"></div><div class="a" style="left:3px;top:2px;width:38px;height:38px;border-radius:50%;background:radial-gradient(circle at 38% 30%,#ffffff 0,#e6e6e6 22%,#9a9a9a 65%,#202020 100%)"></div><div class="a" style="left:12px;top:10px;width:8px;height:5px;border-radius:50%;background:rgba(255,255,255,0.85);transform:rotate(-35deg);filter:blur(0.6px)"></div><div class="t" style="left:1px;top:42px;color:#d8d8d8;font-size:11.5px">Mat</div></div><div class="a" style="left:90.5px;top:959.5px;width:44px;height:58px;background:#5e5e5e;border:1px solid #3c3c3c"><div class="a" style="left:0;top:0;width:42px;height:43px;background:repeating-linear-gradient(135deg,#8e8e8e 0 4px,#656565 4px 9px)"></div><div class="a" style="left:3px;top:2px;width:38px;height:38px;border-radius:50%;background:radial-gradient(circle at 38% 30%,#f0a0a0 0,#b01818 22%,#6a0808 65%,#200000 100%)"></div><div class="a" style="left:12px;top:10px;width:8px;height:5px;border-radius:50%;background:rgba(255,255,255,0.85);transform:rotate(-35deg);filter:blur(0.6px)"></div><div class="t" style="left:1px;top:42px;color:#d8d8d8;font-size:11.5px">Mat.1</div></div><div class="a" style="left:139.5px;top:959.5px;width:44px;height:58px;background:#5e5e5e;border:1px solid #3c3c3c"><div class="a" style="left:0;top:0;width:42px;height:43px;background:repeating-linear-gradient(135deg,#8e8e8e 0 4px,#656565 4px 9px)"></div><div class="a" style="left:3px;top:2px;width:38px;height:38px;border-radius:50%;background:radial-gradient(circle at 38% 30%,#c0ffb0 0,#28e028 22%,#10900e 65%,#003000 100%)"></div><div class="a" style="left:12px;top:10px;width:8px;height:5px;border-radius:50%;background:rgba(255,255,255,0.85);transform:rotate(-35deg);filter:blur(0.6px)"></div><div class="t" style="left:1px;top:42px;color:#d8d8d8;font-size:11.5px">Mat.1</div></div><div class="a" style="left:188.5px;top:959.5px;width:44px;height:58px;background:#5e5e5e;border:1px solid #3c3c3c"><div class="a" style="left:0;top:0;width:42px;height:43px;background:repeating-linear-gradient(135deg,#8e8e8e 0 4px,#656565 4px 9px)"></div><div class="a" style="left:3px;top:2px;width:38px;height:38px;border-radius:50%;background:radial-gradient(circle at 38% 30%,#ffb0b0 0,#f01c1c 22%,#a00808 65%,#300000 100%)"></div><div class="a" style="left:12px;top:10px;width:8px;height:5px;border-radius:50%;background:rgba(255,255,255,0.85);transform:rotate(-35deg);filter:blur(0.6px)"></div><div class="t" style="left:1px;top:42px;color:#d8d8d8;font-size:11.5px">Mat.1</div></div><div class="a" style="left:237.5px;top:959.5px;width:44px;height:58px;background:#5e5e5e;border:1px solid #3c3c3c"><div class="a" style="left:0;top:0;width:42px;height:43px;background:repeating-linear-gradient(135deg,#8e8e8e 0 4px,#656565 4px 9px)"></div><div class="a" style="left:3px;top:2px;width:38px;height:38px;border-radius:50%;background:radial-gradient(circle at 38% 30%,#909090 0,#1c1c1c 22%,#0c0c0c 65%,#000000 100%)"></div><div class="a" style="left:12px;top:10px;width:8px;height:5px;border-radius:50%;background:rgba(255,255,255,0.85);transform:rotate(-35deg);filter:blur(0.6px)"></div><div class="t" style="left:1px;top:42px;color:#d8d8d8;font-size:11.5px">Mat.3</div></div><div class="t" style="left:2px;top:1052px;transform:rotate(-90deg);transform-origin:0 0;font-size:17px;font-weight:bold;font-style:italic;color:#8c8c8c;letter-spacing:-1px;line-height:17px">MAXON</div><div class="t" style="left:20px;top:1052px;transform:rotate(-90deg);transform-origin:0 0;font-size:15.5px;color:#8c8c8c;line-height:15px">CINEMA 4D</div><div class="a" style="left:969px;top:935px;width:299px;height:122px;background:#3a3a3a"></div><div class="a" style="left:970px;top:936px;width:297px;height:120px;background:#474747;border:1px solid #5a5a5a"></div><div class="a" style="left:971px;top:955px;width:295px;height:1px;background:#333"></div><div class="a" style="left:971px;top:956px;width:295px;height:1px;background:#585858"></div><svg class="a" style="left:975px;top:940px" width="12" height="12"><rect width="12" height="12" fill="url(#hp)"/></svg><div class="t" style="left:995px;top:939px;color:#8a8a8a">--</div><div class="t" style="left:1087px;top:939px;color:#8a8a8a">--</div><div class="t" style="left:1180px;top:939px;color:#8a8a8a">--</div><div class="t" style="left:974px;top:964px;color:#c8c8c8;font-size:11px">X</div><div class="a" style="left:984px;top:962px;width:84px;height:17px;background:#3e3e3e;border-radius:3px;border-top:1px solid #333;border-bottom:1px solid #505050"></div><div class="t" style="left:989px;top:964px;color:#808080;font-size:11px">0 cm</div><svg class="a" style="left:1059px;top:964px" width="7" height="13" viewBox="0 0 7 13"><path d="M1,5.5 L3.5,1.5 L6,5.5Z M1,7.5 L3.5,11.5 L6,7.5Z" fill="#666"/></svg><div class="t" style="left:1071px;top:964px;color:#c8c8c8;font-size:11px">X</div><div class="a" style="left:1081px;top:962px;width:84px;height:17px;background:#3e3e3e;border-radius:3px;border-top:1px solid #333;border-bottom:1px solid #505050"></div><div class="t" style="left:1086px;top:964px;color:#808080;font-size:11px">0 cm</div><svg class="a" style="left:1156px;top:964px" width="7" height="13" viewBox="0 0 7 13"><path d="M1,5.5 L3.5,1.5 L6,5.5Z M1,7.5 L3.5,11.5 L6,7.5Z" fill="#666"/></svg><div class="t" style="left:1169px;top:964px;color:#c8c8c8;font-size:11px">H</div><div class="a" style="left:1180px;top:962px;width:84px;height:17px;background:#3e3e3e;border-radius:3px;border-top:1px solid #333;border-bottom:1px solid #505050"></div><div class="t" style="left:1185px;top:964px;color:#808080;font-size:11px">0 °</div><svg class="a" style="left:1255px;top:964px" width="7" height="13" viewBox="0 0 7 13"><path d="M1,5.5 L3.5,1.5 L6,5.5Z M1,7.5 L3.5,11.5 L6,7.5Z" fill="#666"/></svg><div class="t" style="left:974px;top:984px;color:#c8c8c8;font-size:11px">Y</div><div class="a" style="left:984px;top:982px;width:84px;height:17px;background:#3e3e3e;border-radius:3px;border-top:1px solid #333;border-bottom:1px solid #505050"></div><div class="t" style="left:989px;top:984px;color:#808080;font-size:11px">0 cm</div><svg class="a" style="left:1059px;top:984px" width="7" height="13" viewBox="0 0 7 13"><path d="M1,5.5 L3.5,1.5 L6,5.5Z M1,7.5 L3.5,11.5 L6,7.5Z" fill="#666"/></svg><div class="t" style="left:1071px;top:984px;color:#c8c8c8;font-size:11px">Y</div><div class="a" style="left:1081px;top:982px;width:84px;height:17px;background:#3e3e3e;border-radius:3px;border-top:1px solid #333;border-bottom:1px solid #505050"></div><div class="t" style="left:1086px;top:984px;color:#808080;font-size:11px">0 cm</div><svg class="a" style="left:1156px;top:984px" width="7" height="13" viewBox="0 0 7 13"><path d="M1,5.5 L3.5,1.5 L6,5.5Z M1,7.5 L3.5,11.5 L6,7.5Z" fill="#666"/></svg><div class="t" style="left:1169px;top:984px;color:#c8c8c8;font-size:11px">P</div><div class="a" style="left:1180px;top:982px;width:84px;height:17px;background:#3e3e3e;border-radius:3px;border-top:1px solid #333;border-bottom:1px solid #505050"></div><div class="t" style="left:1185px;top:984px;color:#808080;font-size:11px">0 °</div><svg class="a" style="left:1255px;top:984px" width="7" height="13" viewBox="0 0 7 13"><path d="M1,5.5 L3.5,1.5 L6,5.5Z M1,7.5 L3.5,11.5 L6,7.5Z" fill="#666"/></svg><div class="t" style="left:974px;top:1004px;color:#c8c8c8;font-size:11px">Z</div><div class="a" style="left:984px;top:1002px;width:84px;height:17px;background:#3e3e3e;border-radius:3px;border-top:1px solid #333;border-bottom:1px solid #505050"></div><div class="t" style="left:989px;top:1004px;color:#808080;font-size:11px">0 cm</div><svg class="a" style="left:1059px;top:1004px" width="7" height="13" viewBox="0 0 7 13"><path d="M1,5.5 L3.5,1.5 L6,5.5Z M1,7.5 L3.5,11.5 L6,7.5Z" fill="#666"/></svg><div class="t" style="left:1071px;top:1004px;color:#c8c8c8;font-size:11px">Z</div><div class="a" style="left:1081px;top:1002px;width:84px;height:17px;background:#3e3e3e;border-radius:3px;border-top:1px solid #333;border-bottom:1px solid #505050"></div><div class="t" style="left:1086px;top:1004px;color:#808080;font-size:11px">0 cm</div><svg class="a" style="left:1156px;top:1004px" width="7" height="13" viewBox="0 0 7 13"><path d="M1,5.5 L3.5,1.5 L6,5.5Z M1,7.5 L3.5,11.5 L6,7.5Z" fill="#666"/></svg><div class="t" style="left:1169px;top:1004px;color:#c8c8c8;font-size:11px">B</div><div class="a" style="left:1180px;top:1002px;width:84px;height:17px;background:#3e3e3e;border-radius:3px;border-top:1px solid #333;border-bottom:1px solid #505050"></div><div class="t" style="left:1185px;top:1004px;color:#808080;font-size:11px">0 °</div><svg class="a" style="left:1255px;top:1004px" width="7" height="13" viewBox="0 0 7 13"><path d="M1,5.5 L3.5,1.5 L6,5.5Z M1,7.5 L3.5,11.5 L6,7.5Z" fill="#666"/></svg><div class="a" style="left:984px;top:1025px;width:84px;height:16px;background:#565656;border-radius:4px"></div><div class="t" style="left:991px;top:1026px;color:#8a8a8a;font-size:11px">Welt</div><svg class="a" style="left:1054px;top:1030px" width="9" height="6" viewBox="0 0 9 6"><path d="M0,0 L9,0 L4.5,5Z" fill="#8a8a8a"/></svg><div class="a" style="left:1081px;top:1025px;width:84px;height:16px;background:#565656;border-radius:4px"></div><div class="t" style="left:1088px;top:1026px;color:#8a8a8a;font-size:11px">Größe</div><svg class="a" style="left:1151px;top:1030px" width="9" height="6" viewBox="0 0 9 6"><path d="M0,0 L9,0 L4.5,5Z" fill="#8a8a8a"/></svg><div class="a" style="left:1180px;top:1025px;width:82px;height:17px;background:linear-gradient(#6a6a6a,#575757);border-radius:8px;border:1px solid #3a3a3a"></div><div class="t" style="left:1221px;top:1026px;transform:translateX(-50%);color:#e0e0e0;font-size:11.5px">Anwenden</div><div class="a" style="left:0;top:1059px;width:1267px;height:1px;background:#5a5a5a"></div><svg class="a" style="left:4px;top:1064px" width="12" height="12"><rect width="12" height="12" fill="url(#hp)"/></svg><div class="t" style="left:26px;top:1064px;color:#c8ccd2">Drehen: Klicken und ziehen, um Elemente zu drehen. SHIFT drücken, um Drehung zu rastern.</div><div class="a" style="left:0;top:1078px;width:1920px;height:2px;background:#0c0c0c"></div>
<!-- viewport -->
<div class="a" style="left:39px;top:87px;width:1229px;height:788px;background:#3c3c3c"></div>
<div class="a" style="left:40px;top:88px;width:1227px;height:20px;background:#4a4a4a"></div>
<div class="t" style="left:66px;top:92px">Ansicht</div>
<div class="t" style="left:118px;top:92px">Kameras</div>
<div class="t" style="left:174px;top:92px">Darstellung</div>
<div class="t" style="left:248px;top:92px">Optionen</div>
<div class="t" style="left:312px;top:92px">Filter</div>
<div class="t" style="left:351px;top:92px">Tafeln</div>
<div class="a" style="left:41px;top:108px;width:1225px;height:764px;overflow:hidden;background:#d7d7d7">
<svg width="1225" height="764" viewBox="0 0 1225 764" style="position:absolute;left:0;top:0">
<rect width="1225" height="764" fill="#979797"/>
<g stroke="#7a7a7a" stroke-width="1" opacity="0.5"><line x1="-3501.7" y1="192.4" x2="-280897.0" y2="107828.8"/><line x1="-3501.7" y1="192.4" x2="702.1" y2="-507.9"/><line x1="-3391.3" y1="174.0" x2="-298210.9" y2="117435.3"/><line x1="-3559.1" y1="214.7" x2="712.7" y2="-505.8"/><line x1="-3284.7" y1="156.3" x2="-274373.4" y2="110747.0"/><line x1="-3618.9" y1="237.9" x2="723.3" y2="-503.6"/><line x1="-3181.8" y1="139.1" x2="-291599.2" y2="120899.1"/><line x1="-3681.5" y1="262.2" x2="734.1" y2="-501.4"/><line x1="-3082.5" y1="122.6" x2="-267491.4" y2="113825.6"/><line x1="-3747.0" y1="287.6" x2="745.1" y2="-499.2"/><line x1="-2986.6" y1="106.6" x2="-246033.8" y2="107529.7"/><line x1="-3815.6" y1="314.2" x2="756.2" y2="-497.0"/><line x1="-2893.8" y1="91.2" x2="-260220.5" y2="117078.1"/><line x1="-3887.6" y1="342.2" x2="767.5" y2="-494.7"/><line x1="-2804.0" y1="76.2" x2="-238601.3" y2="110430.8"/><line x1="-3963.2" y1="371.5" x2="778.9" y2="-492.4"/><line x1="-2717.2" y1="61.7" x2="-252527.0" y2="120519.7"/><line x1="-4042.7" y1="402.4" x2="790.5" y2="-490.0"/><line x1="-2633.1" y1="47.7" x2="-230761.8" y2="113490.9"/><line x1="-4126.4" y1="434.8" x2="802.2" y2="-487.6"/><line x1="-2551.6" y1="34.1" x2="-211382.2" y2="107232.4"/><line x1="-4214.7" y1="469.1" x2="814.1" y2="-485.2"/><line x1="-2472.6" y1="21.0" x2="-222480.8" y2="116723.2"/><line x1="-4307.8" y1="505.2" x2="826.2" y2="-482.7"/><line x1="-2396.0" y1="8.2" x2="-203052.1" y2="110116.6"/><line x1="-4406.3" y1="543.4" x2="838.5" y2="-480.3"/><line x1="-2321.6" y1="-4.2" x2="-213720.0" y2="120142.8"/><line x1="-4510.6" y1="583.9" x2="850.9" y2="-477.7"/><line x1="-2249.5" y1="-16.2" x2="-194267.3" y2="113158.3"/><line x1="-4621.2" y1="626.8" x2="863.5" y2="-475.2"/><line x1="-2179.4" y1="-27.9" x2="-176940.1" y2="106936.9"/><line x1="-4738.8" y1="672.5" x2="876.3" y2="-472.6"/><line x1="-2111.3" y1="-39.2" x2="-184989.4" y2="116370.6"/><line x1="-4864.0" y1="721.0" x2="889.3" y2="-469.9"/><line x1="-2045.2" y1="-50.2" x2="-167723.5" y2="109804.3"/><line x1="-4997.6" y1="772.9" x2="902.5" y2="-467.2"/><line x1="-1980.8" y1="-60.9" x2="-175175.7" y2="119768.5"/><line x1="-5140.4" y1="828.3" x2="915.9" y2="-464.5"/><line x1="-1918.3" y1="-71.4" x2="-158005.4" y2="112827.8"/><line x1="-5293.5" y1="887.7" x2="929.5" y2="-461.8"/><line x1="-1857.4" y1="-81.5" x2="-142705.7" y2="106643.2"/><line x1="-5458.0" y1="951.5" x2="943.3" y2="-459.0"/><line x1="-1798.1" y1="-91.4" x2="-147743.7" y2="116020.4"/><line x1="-5635.2" y1="1020.3" x2="957.3" y2="-456.1"/><line x1="-1740.4" y1="-101.0" x2="-132613.6" y2="109494.0"/><line x1="-5826.6" y1="1094.5" x2="971.5" y2="-453.2"/><line x1="-1684.2" y1="-110.4" x2="-136891.4" y2="119396.7"/><line x1="-6034.0" y1="1175.0" x2="986.0" y2="-450.3"/><line x1="-1629.4" y1="-119.5" x2="-121974.1" y2="112499.4"/><line x1="-6259.6" y1="1262.6" x2="1000.7" y2="-447.3"/><line x1="-1576.0" y1="-128.4" x2="-108677.1" y2="106351.3"/><line x1="-6505.8" y1="1358.1" x2="1015.6" y2="-444.3"/><line x1="-1523.9" y1="-137.1" x2="-110741.4" y2="115672.4"/><line x1="-6775.6" y1="1462.8" x2="1030.7" y2="-441.2"/><line x1="-1473.1" y1="-145.5" x2="-97720.4" y2="109185.6"/><line x1="-7072.6" y1="1578.0" x2="1046.1" y2="-438.1"/><line x1="-1423.6" y1="-153.8" x2="-98864.3" y2="119027.4"/><line x1="-7401.0" y1="1705.4" x2="1061.8" y2="-434.9"/><line x1="-1375.2" y1="-161.8" x2="-86171.1" y2="112173.1"/><line x1="-7766.1" y1="1847.1" x2="1077.7" y2="-431.7"/><line x1="-1328.0" y1="-169.7" x2="-86286.0" y2="122580.6"/><line x1="-8174.5" y1="2005.6" x2="1093.9" y2="-428.4"/><line x1="-1281.9" y1="-177.4" x2="-73980.1" y2="115326.7"/><line x1="-8634.3" y1="2184.0" x2="1110.3" y2="-425.0"/><line x1="-1236.8" y1="-184.9" x2="-63041.7" y2="108879.0"/><line x1="-9155.9" y1="2386.4" x2="1127.0" y2="-421.6"/><line x1="-1192.8" y1="-192.2" x2="-61092.1" y2="118660.6"/><line x1="-9752.7" y1="2618.0" x2="1144.0" y2="-418.2"/><line x1="-1149.8" y1="-199.4" x2="-50594.3" y2="111848.9"/><line x1="-10442.1" y1="2885.5" x2="1161.3" y2="-414.7"/><line x1="-1107.8" y1="-206.4" x2="-47445.7" y2="122190.7"/><line x1="-11247.6" y1="3198.0" x2="1178.9" y2="-411.1"/><line x1="-1066.7" y1="-213.3" x2="-37457.4" y2="114983.3"/><line x1="-12201.2" y1="3568.1" x2="1196.8" y2="-407.5"/><line x1="-1026.4" y1="-220.0" x2="-28575.7" y2="108574.4"/><line x1="-13347.8" y1="4013.0" x2="1215.0" y2="-403.8"/><line x1="-987.1" y1="-226.5" x2="-23572.0" y2="118296.3"/><line x1="-14752.6" y1="4558.1" x2="1233.6" y2="-400.0"/><line x1="-948.6" y1="-232.9" x2="-15241.6" y2="111526.7"/><line x1="-16514.0" y1="5241.5" x2="1252.5" y2="-396.2"/><line x1="-910.9" y1="-239.2" x2="-948.0" y2="328.8"/><line x1="-3027.9" y1="32212.3" x2="-8872.3" y2="121803.5"/><line x1="-18787.5" y1="6123.7" x2="-948.0" y2="328.8"/><line x1="666.5" y1="-195.7" x2="1271.7" y2="-392.3"/><line x1="-874.0" y1="-245.3" x2="-875.5" y2="305.2"/><line x1="-926.1" y1="19879.5" x2="-1186.2" y2="120485.9"/><line x1="-21834.1" y1="7305.9" x2="-949.8" y2="357.3"/><line x1="687.1" y1="-187.3" x2="1291.2" y2="-388.3"/><line x1="-837.9" y1="-251.4" x2="-805.9" y2="282.6"/><line x1="33.1" y1="14251.5" x2="6335.6" y2="119196.5"/><line x1="-26129.4" y1="8972.5" x2="-951.8" y2="387.4"/><line x1="708.1" y1="-178.6" x2="1311.2" y2="-384.3"/><line x1="-802.5" y1="-257.3" x2="-739.0" y2="260.9"/><line x1="582.2" y1="11029.3" x2="13698.4" y2="117934.3"/><line x1="-32638.6" y1="11498.3" x2="-953.9" y2="419.0"/><line x1="729.8" y1="-169.7" x2="1331.5" y2="-380.1"/><line x1="-767.9" y1="-263.0" x2="-674.7" y2="240.0"/><line x1="937.9" y1="8941.9" x2="22029.8" y2="122756.8"/><line x1="-43667.9" y1="15777.9" x2="-956.0" y2="452.3"/><line x1="752.0" y1="-160.6" x2="1352.1" y2="-375.9"/><line x1="-733.9" y1="-268.7" x2="-612.8" y2="219.9"/><line x1="1187.2" y1="7479.6" x2="29436.9" y2="121419.0"/><line x1="-66429.3" y1="24609.9" x2="-958.3" y2="487.4"/><line x1="774.9" y1="-151.2" x2="1373.2" y2="-371.7"/><line x1="-700.6" y1="-274.2" x2="-553.2" y2="200.5"/><line x1="1371.5" y1="6398.2" x2="36684.5" y2="120110.0"/><line x1="-140911.4" y1="53510.9" x2="-960.8" y2="524.5"/><line x1="798.4" y1="-141.5" x2="1394.7" y2="-367.3"/><line x1="-668.0" y1="-279.7" x2="-495.8" y2="181.9"/><line x1="1513.3" y1="5565.9" x2="43777.8" y2="118828.9"/><line x1="-305479.9" y1="119125.4" x2="-963.3" y2="563.7"/><line x1="822.6" y1="-131.6" x2="1416.6" y2="-362.8"/><line x1="-636.0" y1="-285.0" x2="-440.4" y2="163.9"/><line x1="1625.8" y1="4905.7" x2="50721.6" y2="117574.8"/><line x1="-294861.3" y1="118370.7" x2="-966.0" y2="605.3"/><line x1="847.5" y1="-121.4" x2="1438.9" y2="-358.3"/><line x1="-604.7" y1="-290.2" x2="-387.0" y2="146.5"/><line x1="1717.3" y1="4369.1" x2="60520.2" y2="122366.1"/><line x1="-284376.9" y1="117625.5" x2="-968.9" y2="649.5"/><line x1="873.2" y1="-110.8" x2="1461.6" y2="-353.7"/><line x1="-573.9" y1="-295.3" x2="-335.4" y2="129.8"/><line x1="1793.1" y1="3924.4" x2="67484.6" y2="121037.1"/><line x1="-286313.1" y1="122119.0" x2="-972.0" y2="696.5"/><line x1="899.7" y1="-100.0" x2="1484.8" y2="-349.0"/><line x1="-543.7" y1="-300.4" x2="-285.6" y2="113.6"/><line x1="1856.9" y1="3549.8" x2="74299.6" y2="119736.6"/><line x1="-275558.2" y1="121326.2" x2="-975.2" y2="746.5"/><line x1="926.9" y1="-88.8" x2="1508.5" y2="-344.2"/><line x1="-514.1" y1="-305.3" x2="-237.4" y2="97.9"/><line x1="1911.4" y1="3230.0" x2="80969.9" y2="118463.8"/><line x1="-264942.6" y1="120543.7" x2="-978.7" y2="800.0"/><line x1="955.0" y1="-77.2" x2="1532.7" y2="-339.3"/><line x1="-485.0" y1="-310.2" x2="-190.9" y2="82.8"/><line x1="1958.5" y1="2953.8" x2="87500.0" y2="117217.6"/><line x1="-254463.6" y1="119771.3" x2="-982.5" y2="857.2"/><line x1="984.0" y1="-65.3" x2="1557.3" y2="-334.3"/><line x1="-456.5" y1="-314.9" x2="-145.8" y2="68.2"/><line x1="1999.5" y1="2712.8" x2="98745.9" y2="121978.1"/><line x1="-244118.5" y1="119008.7" x2="-986.5" y2="918.6"/><line x1="1014.0" y1="-53.0" x2="1582.5" y2="-329.2"/><line x1="-428.5" y1="-319.6" x2="-102.1" y2="54.0"/><line x1="2035.7" y1="2500.7" x2="105273.5" y2="120657.8"/><line x1="-233904.7" y1="118255.8" x2="-990.8" y2="984.6"/><line x1="1044.9" y1="-40.3" x2="1608.1" y2="-323.9"/><line x1="-401.0" y1="-324.2" x2="-59.8" y2="40.3"/><line x1="2067.7" y1="2312.6" x2="111661.4" y2="119365.8"/><line x1="-223819.9" y1="117512.4" x2="-995.4" y2="1055.8"/><line x1="1076.8" y1="-27.2" x2="1634.4" y2="-318.6"/><line x1="-374.0" y1="-328.6" x2="-18.9" y2="26.9"/><line x1="2096.4" y1="2144.7" x2="117914.3" y2="118101.1"/><line x1="-223463.5" y1="121995.0" x2="-1000.4" y2="1132.8"/><line x1="1109.8" y1="-13.7" x2="1661.1" y2="-313.2"/><line x1="-347.5" y1="-333.1" x2="20.9" y2="14.0"/><line x1="2122.1" y1="1993.8" x2="130478.9" y2="122933.3"/><line x1="-213133.3" y1="121204.2" x2="-1005.9" y2="1216.4"/><line x1="1144.0" y1="0.4" x2="1688.5" y2="-307.6"/><line x1="-321.5" y1="-337.4" x2="59.4" y2="1.5"/><line x1="2145.3" y1="1857.5" x2="136709.6" y2="121592.7"/><line x1="-202936.7" y1="120423.6" x2="-1011.8" y2="1307.5"/><line x1="1179.4" y1="14.9" x2="1716.5" y2="-301.9"/><line x1="-295.9" y1="-341.7" x2="96.8" y2="-10.6"/><line x1="2166.4" y1="1733.8" x2="142806.1" y2="120281.1"/><line x1="-192871.1" y1="119653.1" x2="-1018.3" y2="1407.0"/><line x1="1216.0" y1="29.9" x2="1745.1" y2="-296.1"/><line x1="-270.7" y1="-345.9" x2="133.2" y2="-22.4"/><line x1="2185.6" y1="1621.0" x2="148772.7" y2="118997.4"/><line x1="-182933.9" y1="118892.3" x2="-1025.5" y2="1516.3"/><line x1="1254.0" y1="45.5" x2="1774.3" y2="-290.2"/><line x1="-246.0" y1="-350.0" x2="168.5" y2="-33.9"/><line x1="2203.2" y1="1517.7" x2="154613.5" y2="117740.8"/><line x1="-173122.7" y1="118141.3" x2="-1033.3" y2="1636.8"/><line x1="1293.3" y1="61.7" x2="1804.1" y2="-284.1"/><line x1="-221.7" y1="-354.0" x2="202.8" y2="-45.1"/><line x1="2219.4" y1="1422.8" x2="168618.5" y2="122541.7"/><line x1="-170837.8" y1="122670.6" x2="-1042.0" y2="1770.4"/><line x1="1334.2" y1="78.5" x2="1834.7" y2="-277.9"/><line x1="-197.8" y1="-358.0" x2="236.1" y2="-55.9"/><line x1="2234.3" y1="1335.3" x2="174414.1" y2="121210.0"/><line x1="-160799.5" y1="121871.4" x2="-1051.7" y2="1919.3"/><line x1="1376.6" y1="95.9" x2="1866.0" y2="-271.6"/><line x1="-174.3" y1="-361.9" x2="268.5" y2="-66.4"/><line x1="2248.1" y1="1254.3" x2="180085.2" y2="119906.9"/><line x1="-150891.6" y1="121082.5" x2="-1062.6" y2="2086.3"/><line x1="1420.7" y1="114.0" x2="1898.0" y2="-265.1"/><line x1="-151.3" y1="-365.8" x2="300.1" y2="-76.7"/><line x1="2260.9" y1="1179.2" x2="185635.9" y2="118631.5"/><line x1="-141111.5" y1="120303.9" x2="-1074.9" y2="2274.9"/><line x1="1466.5" y1="132.8" x2="1930.7" y2="-258.4"/><line x1="-128.5" y1="-369.5" x2="330.8" y2="-86.6"/><line x1="2272.8" y1="1109.4" x2="191069.9" y2="117382.8"/><line x1="-131456.9" y1="119535.2" x2="-1088.9" y2="2489.6"/><line x1="1514.2" y1="152.4" x2="1964.2" y2="-251.6"/><line x1="-106.2" y1="-373.3" x2="360.7" y2="-96.4"/><line x1="2283.9" y1="1044.2" x2="206495.7" y2="122152.9"/><line x1="-121925.3" y1="118776.3" x2="-1105.0" y2="2736.2"/><line x1="1563.9" y1="172.8" x2="1998.6" y2="-244.6"/><line x1="-84.2" y1="-376.9" x2="389.8" y2="-105.8"/><line x1="2294.3" y1="983.3" x2="211861.9" y2="120829.9"/><line x1="-112514.4" y1="118027.0" x2="-1123.7" y2="3022.4"/><line x1="1615.7" y1="194.1" x2="2033.8" y2="-237.5"/><line x1="-62.6" y1="-380.5" x2="418.2" y2="-115.0"/><line x1="2304.0" y1="926.2" x2="217113.3" y2="119535.2"/><line x1="-107933.1" y1="122545.3" x2="-1145.6" y2="3358.7"/><line x1="1669.8" y1="216.3" x2="2069.8" y2="-230.2"/><line x1="-41.3" y1="-384.1" x2="445.9" y2="-124.0"/><line x1="2313.1" y1="872.6" x2="222253.5" y2="118268.0"/><line x1="-98320.3" y1="121748.1" x2="-1171.8" y2="3759.2"/><line x1="1726.3" y1="239.5" x2="2106.8" y2="-222.7"/><line x1="-20.4" y1="-387.6" x2="472.9" y2="-132.8"/><line x1="2321.7" y1="822.2" x2="239061.7" y2="123109.9"/><line x1="-88832.1" y1="120961.2" x2="-1203.4" y2="4244.6"/><line x1="1785.3" y1="263.7" x2="2144.7" y2="-215.0"/><line x1="0.2" y1="-391.0" x2="499.2" y2="-141.3"/><line x1="2329.8" y1="774.8" x2="244113.1" y2="121766.7"/><line x1="-79466.2" y1="120184.5" x2="-1242.6" y2="4844.8"/><line x1="1847.1" y1="289.1" x2="2183.6" y2="-207.1"/><line x1="20.5" y1="-394.4" x2="524.8" y2="-149.7"/><line x1="2337.5" y1="729.9" x2="249055.7" y2="120452.3"/><line x1="-70220.3" y1="119417.7" x2="-1292.2" y2="5606.1"/><line x1="1911.8" y1="315.7" x2="2223.5" y2="-199.0"/><line x1="40.5" y1="-397.7" x2="549.9" y2="-157.8"/><line x1="2344.7" y1="687.6" x2="253892.9" y2="119166.1"/><line x1="-61092.1" y1="118660.6" x2="-1357.3" y2="6603.5"/><line x1="1979.7" y1="343.6" x2="2264.5" y2="-190.6"/><line x1="60.2" y1="-401.0" x2="574.3" y2="-165.7"/><line x1="2351.5" y1="647.4" x2="258628.0" y2="117906.9"/><line x1="-52079.2" y1="117913.2" x2="-1446.2" y2="7966.8"/><line x1="2051.0" y1="372.8" x2="2306.5" y2="-182.1"/><line x1="79.5" y1="-404.2" x2="598.2" y2="-173.5"/><line x1="2358.0" y1="609.4" x2="276849.6" y2="122717.5"/><line x1="-45214.8" y1="122420.4" x2="-1575.1" y2="9942.7"/><line x1="2125.9" y1="403.6" x2="2349.7" y2="-173.3"/><line x1="98.6" y1="-407.4" x2="621.5" y2="-181.1"/><line x1="2364.2" y1="573.2" x2="281473.5" y2="121383.1"/><line x1="-36025.0" y1="121625.2" x2="-1778.7" y2="13063.7"/><line x1="2204.7" y1="436.0" x2="2394.1" y2="-164.3"/><line x1="117.4" y1="-410.5" x2="644.3" y2="-188.5"/><line x1="2370.0" y1="538.9" x2="285998.0" y2="120077.4"/><line x1="-26954.2" y1="120840.3" x2="-2148.5" y2="18731.6"/><line x1="2287.9" y1="470.1" x2="2439.7" y2="-155.0"/><line x1="135.9" y1="-413.6" x2="666.5" y2="-195.7"/><line x1="2375.6" y1="506.2" x2="290426.4" y2="118799.4"/><line x1="-18000.1" y1="120065.4" x2="-3027.9" y2="32212.3"/><line x1="2375.6" y1="506.2" x2="2486.7" y2="-145.5"/><line x1="154.2" y1="-416.6" x2="280879.8" y2="111989.7"/><line x1="-8672.2" y1="114313.2" x2="2534.9" y2="-135.7"/><line x1="172.1" y1="-419.6" x2="314377.3" y2="122327.8"/><line x1="-433.4" y1="118545.3" x2="2584.6" y2="-125.6"/><line x1="189.8" y1="-422.6" x2="303164.3" y2="115123.3"/><line x1="7743.9" y1="108452.4" x2="2635.8" y2="-115.2"/><line x1="207.3" y1="-425.5" x2="293191.8" y2="108715.8"/><line x1="16118.1" y1="112257.3" x2="2688.4" y2="-104.5"/><line x1="224.5" y1="-428.4" x2="326716.4" y2="118435.1"/><line x1="25095.3" y1="116336.1" x2="2742.7" y2="-93.5"/><line x1="241.4" y1="-431.2" x2="110968.7" y2="38986.1"/><line x1="34743.1" y1="120719.6" x2="2798.7" y2="-82.1"/><line x1="258.2" y1="-434.0" x2="65757.1" y2="22376.7"/><line x1="40029.2" y1="110274.2" x2="2856.4" y2="-70.4"/><line x1="274.6" y1="-436.7" x2="47165.1" y2="15546.5"/><line x1="49686.6" y1="114208.1" x2="2916.0" y2="-58.3"/><line x1="290.9" y1="-439.4" x2="37030.0" y2="11823.2"/><line x1="60051.6" y1="118430.2" x2="2977.5" y2="-45.8"/><line x1="306.9" y1="-442.1" x2="30650.8" y2="9479.6"/><line x1="71204.8" y1="122973.5" x2="3041.0" y2="-32.9"/><line x1="322.7" y1="-444.7" x2="26266.1" y2="7868.8"/><line x1="73391.1" y1="112156.9" x2="3106.7" y2="-19.6"/><line x1="338.3" y1="-447.3" x2="23067.0" y2="6693.6"/><line x1="84414.6" y1="116226.4" x2="3174.6" y2="-5.8"/><line x1="353.7" y1="-449.9" x2="20629.8" y2="5798.2"/><line x1="96260.3" y1="120599.4" x2="3244.9" y2="8.5"/><line x1="368.9" y1="-452.4" x2="18711.3" y2="5093.4"/><line x1="96256.0" y1="110178.2" x2="3317.7" y2="23.3"/><line x1="383.8" y1="-454.9" x2="17161.9" y2="4524.2"/><line x1="107884.3" y1="114103.3" x2="3393.0" y2="38.6"/><line x1="398.6" y1="-457.4" x2="15884.4" y2="4054.9"/><line x1="120363.4" y1="118315.6" x2="3471.2" y2="54.4"/><line x1="413.2" y1="-459.8" x2="14813.0" y2="3661.3"/><line x1="133790.2" y1="122847.7" x2="3552.2" y2="70.9"/><line x1="427.5" y1="-462.2" x2="13901.6" y2="3326.5"/><line x1="130508.8" y1="112056.7" x2="3636.4" y2="88.0"/><line x1="441.7" y1="-464.6" x2="13116.7" y2="3038.1"/><line x1="143567.4" y1="116116.9" x2="3723.8" y2="105.7"/><line x1="455.7" y1="-466.9" x2="12433.8" y2="2787.3"/><line x1="157598.5" y1="120479.5" x2="3814.6" y2="124.2"/><line x1="469.6" y1="-469.2" x2="11834.3" y2="2567.0"/><line x1="152333.0" y1="110082.5" x2="3909.1" y2="143.4"/><line x1="483.2" y1="-471.5" x2="11303.6" y2="2372.0"/><line x1="165921.6" y1="113998.8" x2="4007.5" y2="163.4"/><line x1="496.7" y1="-473.7" x2="10830.6" y2="2198.3"/><line x1="180503.0" y1="118201.2" x2="4110.1" y2="184.2"/><line x1="510.0" y1="-475.9" x2="10406.4" y2="2042.4"/><line x1="196190.1" y1="122722.3" x2="4217.0" y2="205.9"/><line x1="523.1" y1="-478.1" x2="10023.8" y2="1901.9"/><line x1="187472.0" y1="111956.8" x2="4328.6" y2="228.6"/><line x1="536.1" y1="-480.3" x2="9677.0" y2="1774.5"/><line x1="202554.3" y1="116007.7" x2="4445.3" y2="252.3"/><line x1="548.9" y1="-482.4" x2="9361.1" y2="1658.4"/><line x1="218758.2" y1="120359.9" x2="4567.3" y2="277.0"/><line x1="561.6" y1="-484.5" x2="9072.2" y2="1552.3"/><line x1="208261.0" y1="109987.0" x2="4695.0" y2="303.0"/><line x1="574.1" y1="-486.6" x2="8807.0" y2="1454.9"/><line x1="223799.2" y1="113894.5" x2="4828.8" y2="330.2"/><line x1="586.4" y1="-488.7" x2="8562.7" y2="1365.1"/><line x1="240471.0" y1="118087.1" x2="4969.3" y2="358.7"/><line x1="598.6" y1="-490.7" x2="8336.9" y2="1282.2"/><line x1="258405.1" y1="122597.2" x2="5116.8" y2="388.7"/><line x1="610.7" y1="-492.7" x2="8127.6" y2="1205.3"/><line x1="244281.1" y1="111857.2" x2="5272.0" y2="420.2"/><line x1="622.6" y1="-494.7" x2="7933.0" y2="1133.8"/><line x1="261376.1" y1="115898.9" x2="5435.5" y2="453.4"/><line x1="634.4" y1="-496.7" x2="7751.7" y2="1067.2"/><line x1="279740.4" y1="120240.7" x2="5607.9" y2="488.4"/><line x1="646.0" y1="-498.6" x2="7582.3" y2="1004.9"/><line x1="264040.5" y1="109891.7" x2="5789.9" y2="525.4"/><line x1="657.5" y1="-500.5" x2="7423.7" y2="946.7"/><line x1="281517.7" y1="113790.6" x2="5982.5" y2="564.5"/><line x1="668.8" y1="-502.4" x2="7274.9" y2="892.0"/><line x1="300268.2" y1="117973.4" x2="6186.6" y2="605.9"/><line x1="680.1" y1="-504.3" x2="7135.0" y2="840.6"/><line x1="320436.3" y1="122472.5" x2="6403.2" y2="649.9"/><line x1="691.2" y1="-506.1" x2="7003.2" y2="792.2"/><line x1="300937.0" y1="111757.9" x2="6633.5" y2="696.7"/><line x1="702.1" y1="-507.9" x2="6878.9" y2="746.5"/><line x1="320033.4" y1="115790.4" x2="6878.9" y2="746.5"/></g>
<polygon points="-948.0,328.8 -933.2,323.9 -918.5,319.2 -903.9,314.4 -889.4,309.7 -875.1,305.1 -860.9,300.5 -846.8,295.9 -832.8,291.3 -818.9,286.8 -805.2,282.4 -791.5,277.9 -778.0,273.5 -764.5,269.2 -751.2,264.8 -738.0,260.5 -724.9,256.3 -711.9,252.1 -698.9,247.9 -686.1,243.7 -673.4,239.6 -660.8,235.5 -648.3,231.4 -635.8,227.4 -623.5,223.4 -611.3,219.4 -599.1,215.4 -587.1,211.5 -575.1,207.6 -563.2,203.8 -551.4,199.9 -539.8,196.1 -528.1,192.4 -516.6,188.6 -505.2,184.9 -493.8,181.2 -482.5,177.6 -471.3,173.9 -460.2,170.3 -449.2,166.7 -438.2,163.2 -427.4,159.6 -416.6,156.1 -405.9,152.7 -395.2,149.2 -384.6,145.8 -374.1,142.4 -363.7,139.0 -353.4,135.6 -343.1,132.3 -332.9,129.0 -322.8,125.7 -312.7,122.4 -302.7,119.1 -292.8,115.9 -282.9,112.7 -273.1,109.5 -263.4,106.4 -253.7,103.2 -244.1,100.1 -234.6,97.0 -225.1,93.9 -215.7,90.9 -206.4,87.9 -197.1,84.8 -187.9,81.8 -178.7,78.9 -169.6,75.9 -160.6,73.0 -151.6,70.1 -142.7,67.2 -133.8,64.3 -125.0,61.4 -116.2,58.6 -107.5,55.7 -98.9,52.9 -90.3,50.2 -81.8,47.4 -73.3,44.6 -64.9,41.9 -56.5,39.2 -48.2,36.5 -39.9,33.8 -31.7,31.1 -23.5,28.5 -15.4,25.8 -7.4,23.2 0.7,20.6 8.6,18.0 16.5,15.4 24.4,12.9 32.2,10.3 40.0,7.8 47.7,5.3 55.4,2.8 63.0,0.3 70.6,-2.1 78.2,-4.6 85.7,-7.0 93.1,-9.4 100.5,-11.8 107.9,-14.2 115.2,-16.6 122.5,-19.0 129.8,-21.3 137.0,-23.7 144.1,-26.0 151.2,-28.3 158.3,-30.6 165.3,-32.9 172.3,-35.2 179.3,-37.4 186.2,-39.7 193.0,-41.9 199.9,-44.1 206.7,-46.3 213.4,-48.5 220.1,-50.7 226.8,-52.9 233.5,-55.0 240.1,-57.2 246.6,-59.3 253.2,-61.4 259.7,-63.5 266.1,-65.6 272.6,-67.7 279.0,-69.8 285.3,-71.9 291.6,-73.9 297.9,-76.0 304.2,-78.0 310.4,-80.0 316.6,-82.0 322.7,-84.0 328.8,-86.0 334.9,-88.0 341.0,-89.9 347.0,-91.9 353.0,-93.8 358.9,-95.8 364.9,-97.7 370.8,-99.6 376.6,-101.5 382.5,-103.4 388.3,-105.3 394.0,-107.2 399.8,-109.0 405.5,-110.9 411.2,-112.7 416.8,-114.6 422.4,-116.4 428.0,-118.2 433.6,-120.0 439.1,-121.8 444.7,-123.6 450.1,-125.4 455.6,-127.2 461.0,-128.9 466.4,-130.7 471.8,-132.4 477.1,-134.2 482.5,-135.9 487.7,-137.6 493.0,-139.3 498.2,-141.0 503.5,-142.7 508.6,-144.4 513.8,-146.1 518.9,-147.8 524.1,-149.4 529.1,-151.1 534.2,-152.7 539.2,-154.4 544.3,-156.0 549.2,-157.6 554.2,-159.2 559.1,-160.8 564.1,-162.4 569.0,-164.0 573.8,-165.6 578.7,-167.2 583.5,-168.7 588.3,-170.3 593.1,-171.8 597.8,-173.4 602.6,-174.9 607.3,-176.4 612.0,-178.0 616.6,-179.5 621.3,-181.0 625.9,-182.5 630.5,-184.0 635.1,-185.5 639.6,-187.0 644.2,-188.4 648.7,-189.9 653.2,-191.4 657.7,-192.8 662.1,-194.3 666.5,-195.7 666.5,-195.7 670.6,-194.0 674.7,-192.3 678.8,-190.6 683.0,-188.9 687.2,-187.2 691.3,-185.5 695.6,-183.8 699.8,-182.0 704.1,-180.3 708.3,-178.5 712.6,-176.8 717.0,-175.0 721.3,-173.2 725.7,-171.4 730.1,-169.6 734.5,-167.8 739.0,-166.0 743.4,-164.1 747.9,-162.3 752.5,-160.4 757.0,-158.5 761.6,-156.7 766.2,-154.8 770.8,-152.9 775.5,-151.0 780.2,-149.0 784.9,-147.1 789.6,-145.2 794.4,-143.2 799.1,-141.2 804.0,-139.3 808.8,-137.3 813.7,-135.3 818.6,-133.3 823.5,-131.2 828.4,-129.2 833.4,-127.2 838.4,-125.1 843.5,-123.0 848.6,-120.9 853.7,-118.9 858.8,-116.7 864.0,-114.6 869.2,-112.5 874.4,-110.3 879.7,-108.2 884.9,-106.0 890.3,-103.8 895.6,-101.6 901.0,-99.4 906.4,-97.2 911.9,-94.9 917.4,-92.7 922.9,-90.4 928.4,-88.1 934.0,-85.9 939.7,-83.5 945.3,-81.2 951.0,-78.9 956.7,-76.5 962.5,-74.2 968.3,-71.8 974.2,-69.4 980.0,-67.0 985.9,-64.5 991.9,-62.1 997.9,-59.6 1003.9,-57.2 1010.0,-54.7 1016.1,-52.2 1022.2,-49.6 1028.4,-47.1 1034.7,-44.5 1040.9,-42.0 1047.2,-39.4 1053.6,-36.8 1060.0,-34.1 1066.4,-31.5 1072.9,-28.8 1079.4,-26.1 1086.0,-23.4 1092.6,-20.7 1099.3,-18.0 1106.0,-15.2 1112.7,-12.5 1119.5,-9.7 1126.3,-6.9 1133.2,-4.0 1140.2,-1.2 1147.2,1.7 1154.2,4.6 1161.3,7.5 1168.4,10.4 1175.6,13.3 1182.8,16.3 1190.1,19.3 1197.4,22.3 1204.8,25.4 1212.3,28.4 1219.8,31.5 1227.3,34.6 1234.9,37.7 1242.6,40.9 1250.3,44.0 1258.0,47.2 1265.9,50.4 1273.8,53.7 1281.7,56.9 1289.7,60.2 1297.8,63.5 1305.9,66.9 1314.1,70.2 1322.3,73.6 1330.6,77.0 1339.0,80.5 1347.4,83.9 1355.9,87.4 1364.5,90.9 1373.1,94.5 1381.8,98.0 1390.6,101.6 1399.4,105.3 1408.3,108.9 1417.3,112.6 1426.3,116.3 1435.4,120.1 1444.6,123.8 1453.9,127.6 1463.2,131.5 1472.6,135.3 1482.1,139.2 1491.7,143.2 1501.3,147.1 1511.1,151.1 1520.9,155.1 1530.7,159.2 1540.7,163.3 1550.7,167.4 1560.9,171.6 1571.1,175.8 1581.4,180.0 1591.8,184.3 1602.3,188.6 1612.8,192.9 1623.5,197.3 1634.2,201.7 1645.1,206.1 1656.0,210.6 1667.0,215.2 1678.2,219.7 1689.4,224.4 1700.7,229.0 1712.1,233.7 1723.7,238.4 1735.3,243.2 1747.0,248.0 1758.9,252.9 1770.8,257.8 1782.9,262.7 1795.1,267.7 1807.3,272.8 1819.7,277.9 1832.2,283.0 1844.9,288.2 1857.6,293.4 1870.5,298.7 1883.5,304.1 1896.6,309.4 1909.8,314.9 1923.2,320.4 1936.7,325.9 1950.3,331.5 1964.1,337.1 1977.9,342.9 1992.0,348.6 2006.1,354.4 2020.4,360.3 2034.9,366.2 2049.5,372.2 2064.2,378.3 2079.1,384.4 2094.2,390.6 2109.4,396.8 2124.7,403.1 2140.2,409.5 2155.9,415.9 2171.7,422.4 2187.8,429.0 2203.9,435.7 2220.3,442.4 2236.8,449.2 2253.5,456.0 2270.4,462.9 2287.4,469.9 2304.7,477.0 2322.1,484.2 2339.7,491.4 2357.6,498.8 2375.6,506.2 2375.6,506.2 2374.5,512.6 2373.4,519.1 2372.3,525.7 2371.1,532.3 2370.0,539.0 2368.8,545.8 2367.7,552.6 2366.5,559.6 2365.3,566.5 2364.1,573.6 2362.9,580.7 2361.7,587.9 2360.4,595.2 2359.2,602.5 2357.9,609.9 2356.6,617.4 2355.3,625.0 2354.0,632.6 2352.7,640.4 2351.4,648.2 2350.0,656.1 2348.7,664.1 2347.3,672.2 2345.9,680.3 2344.5,688.6 2343.1,696.9 2341.6,705.4 2340.2,713.9 2338.7,722.5 2337.2,731.2 2335.7,740.1 2334.2,749.0 2332.7,758.0 2331.1,767.1 2329.5,776.4 2328.0,785.7 2326.3,795.2 2324.7,804.7 2323.1,814.4 2321.4,824.2 2319.7,834.1 2318.0,844.2 2316.3,854.3 2314.5,864.6 2312.7,875.0 2310.9,885.5 2309.1,896.2 2307.3,907.0 2305.4,917.9 2303.5,929.0 2301.6,940.2 2299.7,951.6 2297.7,963.1 2295.7,974.7 2293.7,986.5 2291.7,998.5 2289.6,1010.6 2287.5,1022.9 2285.4,1035.4 2283.3,1048.0 2281.1,1060.8 2278.9,1073.8 2276.6,1086.9 2274.4,1100.2 2272.0,1113.8 2269.7,1127.5 2267.3,1141.4 2264.9,1155.5 2262.5,1169.8 2260.0,1184.3 2257.5,1199.1 2255.0,1214.0 2252.4,1229.2 2249.8,1244.6 2247.1,1260.2 2244.4,1276.1 2241.6,1292.2 2238.8,1308.6 2236.0,1325.2 2233.1,1342.1 2230.2,1359.2 2227.2,1376.6 2224.2,1394.3 2221.2,1412.3 2218.0,1430.6 2214.9,1449.2 2211.7,1468.1 2208.4,1487.3 2205.1,1506.8 2201.7,1526.7 2198.2,1546.9 2194.7,1567.5 2191.2,1588.4 2187.5,1609.7 2183.8,1631.3 2180.1,1653.4 2176.3,1675.8 2172.4,1698.7 2168.4,1722.0 2164.3,1745.7 2160.2,1769.9 2156.0,1794.5 2151.8,1819.6 2147.4,1845.2 2142.9,1871.3 2138.4,1897.9 2133.8,1925.0 2129.1,1952.7 2124.3,1980.9 2119.4,2009.7 2114.3,2039.1 2109.2,2069.2 2104.0,2099.8 2098.7,2131.2 2093.2,2163.2 2087.6,2195.9 2081.9,2229.3 2076.1,2263.5 2070.1,2298.4 2064.1,2334.2 2057.8,2370.8 2051.4,2408.2 2044.9,2446.5 2038.2,2485.8 2031.4,2526.0 2024.4,2567.2 2017.2,2609.4 2009.8,2652.6 2002.2,2697.0 1994.5,2742.5 1986.5,2789.3 1978.3,2837.2 1969.9,2886.5 1961.3,2937.1 1952.5,2989.1 1943.3,3042.5 1934.0,3097.5 1924.3,3154.0 1914.4,3212.2 1904.2,3272.2 1893.7,3333.9 1882.8,3397.5 1871.7,3463.2 1860.1,3530.8 1848.2,3600.7 1835.9,3672.8 1823.2,3747.3 1810.1,3824.4 1796.5,3904.0 1782.5,3986.5 1767.9,4071.9 1752.8,4160.3 1737.2,4252.0 1721.0,4347.2 1704.2,4446.0 1686.7,4548.6 1668.5,4655.3 1649.6,4766.3 1629.9,4882.0 1609.3,5000.0 1587.9,5000.0 1565.5,5000.0 1542.1,5000.0 1517.7,5000.0 1492.1,5000.0 1465.2,5000.0 1437.0,5000.0 1407.4,5000.0 1376.3,5000.0 1343.4,5000.0 1308.8,5000.0 1272.2,5000.0 1233.5,5000.0 1192.5,5000.0 1148.9,5000.0 1102.5,5000.0 1053.1,5000.0 1000.3,5000.0 943.8,5000.0 883.2,5000.0 817.9,5000.0 747.6,5000.0 671.4,5000.0 588.7,5000.0 498.6,5000.0 400.1,5000.0 291.9,5000.0 172.5,5000.0 40.1,5000.0 -107.6,5000.0 -273.3,5000.0 -460.7,5000.0 -674.1,5000.0 -919.5,5000.0 -1204.6,5000.0 -1540.0,5000.0 -2395.1,5000.0 -2259.4,5000.0 -2145.9,5000.0 -2049.5,5000.0 -1966.8,5000.0 -1894.9,5000.0 -1831.8,5000.0 -1776.1,5000.0 -1726.5,5000.0 -1682.1,5000.0 -1642.0,5000.0 -1605.8,5000.0 -1572.8,5000.0 -1542.6,5000.0 -1514.9,5000.0 -1489.5,5000.0 -1465.9,5000.0 -1444.1,5000.0 -1423.9,5000.0 -1405.0,5000.0 -1387.4,5000.0 -1370.9,5000.0 -1355.4,5000.0 -1340.9,5000.0 -1327.2,5000.0 -1314.3,5000.0 -1302.1,5000.0 -1290.6,5000.0 -1279.6,5000.0 -1269.2,5000.0 -1259.4,5000.0 -1250.0,4958.3 -1241.0,4821.3 -1232.5,4690.6 -1224.4,4565.8 -1216.6,4446.5 -1209.2,4332.4 -1202.0,4223.1 -1195.2,4118.4 -1188.6,4017.9 -1182.3,3921.4 -1176.3,3828.7 -1170.5,3739.5 -1164.9,3653.7 -1159.5,3571.0 -1154.3,3491.3 -1149.3,3414.5 -1144.4,3340.4 -1139.8,3268.8 -1135.3,3199.6 -1130.9,3132.7 -1126.7,3068.0 -1122.6,3005.4 -1118.6,2944.8 -1114.8,2886.0 -1111.1,2829.1 -1107.5,2773.9 -1104.0,2720.3 -1100.6,2668.3 -1097.3,2617.8 -1094.1,2568.7 -1091.0,2521.0 -1088.0,2474.6 -1085.0,2429.5 -1082.2,2385.6 -1079.4,2342.9 -1076.7,2301.3 -1074.0,2260.8 -1071.4,2221.3 -1068.9,2182.8 -1066.5,2145.3 -1064.1,2108.7 -1061.8,2073.0 -1059.5,2038.1 -1057.3,2004.1 -1055.1,1970.9 -1053.0,1938.4 -1050.9,1906.7 -1048.9,1875.7 -1046.9,1845.4 -1045.0,1815.8 -1043.1,1786.8 -1041.2,1758.4 -1039.4,1730.7 -1037.7,1703.5 -1035.9,1676.9 -1034.2,1650.9 -1032.6,1625.4 -1030.9,1600.4 -1029.3,1576.0 -1027.8,1552.0 -1026.2,1528.5 -1024.7,1505.4 -1023.3,1482.8 -1021.8,1460.6 -1020.4,1438.9 -1019.0,1417.6 -1017.6,1396.6 -1016.3,1376.1 -1015.0,1355.9 -1013.7,1336.1 -1012.4,1316.6 -1011.2,1297.5 -1010.0,1278.7 -1008.8,1260.3 -1007.6,1242.2 -1006.4,1224.4 -1005.3,1206.9 -1004.1,1189.6 -1003.0,1172.7 -1002.0,1156.1 -1000.9,1139.7 -999.8,1123.6 -998.8,1107.8 -997.8,1092.2 -996.8,1076.9 -995.8,1061.8 -994.8,1046.9 -993.9,1032.3 -992.9,1017.9 -992.0,1003.7 -991.1,989.8 -990.2,976.0 -989.3,962.5 -988.5,949.2 -987.6,936.0 -986.8,923.1 -985.9,910.3 -985.1,897.7 -984.3,885.3 -983.5,873.1 -982.7,861.1 -981.9,849.2 -981.2,837.5 -980.4,825.9 -979.7,814.6 -978.9,803.3 -978.2,792.2 -977.5,781.3 -976.8,770.5 -976.1,759.9 -975.4,749.4 -974.7,739.0 -974.1,728.8 -973.4,718.7 -972.8,708.7 -972.1,698.9 -971.5,689.2 -970.9,679.6 -970.3,670.1 -969.6,660.8 -969.0,651.6 -968.4,642.4 -967.9,633.4 -967.3,624.5 -966.7,615.8 -966.1,607.1 -965.6,598.5 -965.0,590.0 -964.5,581.6 -963.9,573.3 -963.4,565.2 -962.9,557.1 -962.4,549.1 -961.8,541.2 -961.3,533.4 -960.8,525.6 -960.3,518.0 -959.8,510.5 -959.3,503.0 -958.9,495.6 -958.4,488.3 -957.9,481.1 -957.5,473.9 -957.0,466.9 -956.5,459.9 -956.1,453.0 -955.6,446.1 -955.2,439.4 -954.8,432.7 -954.3,426.0 -953.9,419.5 -953.5,413.0 -953.1,406.6 -952.6,400.2 -952.2,393.9 -951.8,387.7 -951.4,381.5 -951.0,375.4 -950.6,369.4 -950.2,363.4 -949.9,357.5 -949.5,351.6 -949.1,345.8 -948.7,340.1 -948.4,334.4 -948.0,328.8" fill="#d9d9d9"/>
<rect x="0" y="0" width="1225" height="39" fill="#000" opacity="0.045"/>
<rect x="0" y="726" width="1225" height="38" fill="#000" opacity="0.045"/>
<rect x="0" y="0" width="1225" height="1" fill="#fff" opacity="0.3"/>
<g stroke="#6a6a6a" stroke-width="1" opacity="0.62" stroke-dasharray="7 1"><line x1="-948.0" y1="328.8" x2="-3027.9" y2="32212.3"/><line x1="-875.5" y1="305.2" x2="-926.1" y2="19879.5"/><line x1="-805.9" y1="282.6" x2="33.1" y2="14251.5"/><line x1="-739.0" y1="260.9" x2="582.2" y2="11029.3"/><line x1="-674.7" y1="240.0" x2="937.9" y2="8941.9"/><line x1="-612.8" y1="219.9" x2="1187.2" y2="7479.6"/><line x1="-553.2" y1="200.5" x2="1371.5" y2="6398.2"/><line x1="-495.8" y1="181.9" x2="1513.3" y2="5565.9"/><line x1="-440.4" y1="163.9" x2="1625.8" y2="4905.7"/><line x1="-387.0" y1="146.5" x2="1717.3" y2="4369.1"/><line x1="-335.4" y1="129.8" x2="1793.1" y2="3924.4"/><line x1="-285.6" y1="113.6" x2="1856.9" y2="3549.8"/><line x1="-237.4" y1="97.9" x2="1911.4" y2="3230.0"/><line x1="-190.9" y1="82.8" x2="1958.5" y2="2953.8"/><line x1="-145.8" y1="68.2" x2="1999.5" y2="2712.8"/><line x1="-102.1" y1="54.0" x2="2035.7" y2="2500.7"/><line x1="-59.8" y1="40.3" x2="2067.7" y2="2312.6"/><line x1="-18.9" y1="26.9" x2="2096.4" y2="2144.7"/><line x1="20.9" y1="14.0" x2="2122.1" y2="1993.8"/><line x1="59.4" y1="1.5" x2="2145.3" y2="1857.5"/><line x1="597.3" y1="411.2" x2="2166.4" y2="1733.8"/><line x1="133.2" y1="-22.4" x2="2185.6" y2="1621.0"/><line x1="168.5" y1="-33.9" x2="2203.2" y2="1517.7"/><line x1="202.8" y1="-45.1" x2="2219.4" y2="1422.8"/><line x1="236.1" y1="-55.9" x2="2234.3" y2="1335.3"/><line x1="268.5" y1="-66.4" x2="2248.1" y2="1254.3"/><line x1="300.1" y1="-76.7" x2="2260.9" y2="1179.2"/><line x1="330.8" y1="-86.6" x2="2272.8" y2="1109.4"/><line x1="360.7" y1="-96.4" x2="2283.9" y2="1044.2"/><line x1="389.8" y1="-105.8" x2="2294.3" y2="983.3"/><line x1="418.2" y1="-115.0" x2="2304.0" y2="926.2"/><line x1="445.9" y1="-124.0" x2="2313.1" y2="872.6"/><line x1="472.9" y1="-132.8" x2="2321.7" y2="822.2"/><line x1="499.2" y1="-141.3" x2="2329.8" y2="774.8"/><line x1="524.8" y1="-149.7" x2="2337.5" y2="729.9"/><line x1="549.9" y1="-157.8" x2="2344.7" y2="687.6"/><line x1="574.3" y1="-165.7" x2="2351.5" y2="647.4"/><line x1="598.2" y1="-173.5" x2="2358.0" y2="609.4"/><line x1="621.5" y1="-181.1" x2="2364.2" y2="573.2"/><line x1="644.3" y1="-188.5" x2="2370.0" y2="538.9"/><line x1="666.5" y1="-195.7" x2="2375.6" y2="506.2"/></g>
<g stroke="#808080" stroke-width="1" opacity="0.55" stroke-dasharray="3 1.2"><line x1="-948.0" y1="328.8" x2="666.5" y2="-195.7"/><line x1="-949.8" y1="357.3" x2="687.1" y2="-187.3"/><line x1="-951.8" y1="387.4" x2="708.1" y2="-178.6"/><line x1="-953.9" y1="419.0" x2="729.8" y2="-169.7"/><line x1="-956.0" y1="452.3" x2="752.0" y2="-160.6"/><line x1="-958.3" y1="487.4" x2="774.9" y2="-151.2"/><line x1="-960.8" y1="524.5" x2="798.4" y2="-141.5"/><line x1="-963.3" y1="563.7" x2="822.6" y2="-131.6"/><line x1="-966.0" y1="605.3" x2="847.5" y2="-121.4"/><line x1="-968.9" y1="649.5" x2="873.2" y2="-110.8"/><line x1="-972.0" y1="696.5" x2="899.7" y2="-100.0"/><line x1="-975.2" y1="746.5" x2="926.9" y2="-88.8"/><line x1="-978.7" y1="800.0" x2="955.0" y2="-77.2"/><line x1="-982.5" y1="857.2" x2="984.0" y2="-65.3"/><line x1="-986.5" y1="918.6" x2="1014.0" y2="-53.0"/><line x1="-990.8" y1="984.6" x2="1044.9" y2="-40.3"/><line x1="-995.4" y1="1055.8" x2="1076.8" y2="-27.2"/><line x1="-1000.4" y1="1132.8" x2="1109.8" y2="-13.7"/><line x1="-1005.9" y1="1216.4" x2="1144.0" y2="0.4"/><line x1="-1011.8" y1="1307.5" x2="1179.4" y2="14.9"/><line x1="-1018.3" y1="1407.0" x2="597.3" y2="411.2"/><line x1="-1025.5" y1="1516.3" x2="1254.0" y2="45.5"/><line x1="-1033.3" y1="1636.8" x2="1293.3" y2="61.7"/><line x1="-1042.0" y1="1770.4" x2="1334.2" y2="78.5"/><line x1="-1051.7" y1="1919.3" x2="1376.6" y2="95.9"/><line x1="-1062.6" y1="2086.3" x2="1420.7" y2="114.0"/><line x1="-1074.9" y1="2274.9" x2="1466.5" y2="132.8"/><line x1="-1088.9" y1="2489.6" x2="1514.2" y2="152.4"/><line x1="-1105.0" y1="2736.2" x2="1563.9" y2="172.8"/><line x1="-1123.7" y1="3022.4" x2="1615.7" y2="194.1"/><line x1="-1145.6" y1="3358.7" x2="1669.8" y2="216.3"/><line x1="-1171.8" y1="3759.2" x2="1726.3" y2="239.5"/><line x1="-1203.4" y1="4244.6" x2="1785.3" y2="263.7"/><line x1="-1242.6" y1="4844.8" x2="1847.1" y2="289.1"/><line x1="-1292.2" y1="5606.1" x2="1911.8" y2="315.7"/><line x1="-1357.3" y1="6603.5" x2="1979.7" y2="343.6"/><line x1="-1446.2" y1="7966.8" x2="2051.0" y2="372.8"/><line x1="-1575.1" y1="9942.7" x2="2125.9" y2="403.6"/><line x1="-1778.7" y1="13063.7" x2="2204.7" y2="436.0"/><line x1="-2148.5" y1="18731.6" x2="2287.9" y2="470.1"/><line x1="-3027.9" y1="32212.3" x2="2375.6" y2="506.2"/></g>
<line x1="96.8" y1="-10.6" x2="597.3" y2="411.2" stroke="#7070c0" stroke-width="1" opacity="0.7" stroke-dasharray="5 1"/>
<line x1="597.3" y1="411.2" x2="1216.0" y2="29.9" stroke="#c06868" stroke-width="1" opacity="0.7" stroke-dasharray="4 1.2"/>
</svg>
<svg width="1225" height="764" viewBox="0 0 1225 764" style="position:absolute;left:0;top:0">
<defs>
<linearGradient id="bodyg" x1="0" y1="0" x2="0" y2="1">
<stop offset="0" stop-color="#e6e6e6"/><stop offset="0.5" stop-color="#f4f4f4"/><stop offset="1" stop-color="#e0e0e0"/>
</linearGradient>
<linearGradient id="holeg" x1="0" y1="0" x2="1" y2="0">
<stop offset="0" stop-color="#1a1a1a"/><stop offset="0.12" stop-color="#5a5a5a"/><stop offset="0.4" stop-color="#c8c8c8"/><stop offset="0.7" stop-color="#e6e6e6"/><stop offset="1" stop-color="#cfcfcf"/>
</linearGradient>
<radialGradient id="capg" cx="0.45" cy="0.55" r="0.6">
<stop offset="0" stop-color="#dcdcdc"/><stop offset="0.75" stop-color="#d6d6d6"/><stop offset="1" stop-color="#f2f2f2"/>
</radialGradient>
</defs>
<filter id="bevel" x="-5%" y="-5%" width="110%" height="110%" color-interpolation-filters="sRGB">
  <feGaussianBlur in="SourceAlpha" stdDeviation="7.5" result="blur"/>
  <feDiffuseLighting in="blur" surfaceScale="10" diffuseConstant="1.18" lighting-color="#ffffff" result="light">
     <feDistantLight azimuth="200" elevation="58"/>
  </feDiffuseLighting>
  <feComponentTransfer in="light" result="l2"><feFuncR type="linear" slope="0.58" intercept="0.38"/><feFuncG type="linear" slope="0.58" intercept="0.38"/><feFuncB type="linear" slope="0.58" intercept="0.38"/></feComponentTransfer>
  <feComposite in="l2" in2="SourceAlpha" operator="in"/>
</filter>
<path d="M639.0,246.6 C650.6,246.4 662.1,247.8 670.9,250.0 C679.7,252.2 686.0,255.9 691.8,259.8 C697.6,263.8 702.1,268.6 705.7,273.7 C709.3,278.8 711.9,285.2 713.3,290.3 C714.7,295.4 714.6,299.6 714.3,304.2 C713.9,308.8 713.1,313.5 711.2,318.1 C709.3,322.7 706.6,327.4 702.9,332.0 C699.2,336.6 692.9,341.7 689.0,345.9 C685.1,350.1 681.1,353.3 679.3,357.0 C677.4,360.7 677.7,363.9 677.9,368.1 C678.1,372.3 678.3,378.0 680.7,382.0 C683.1,386.0 688.4,389.3 692.3,392.0 C696.2,394.7 698.4,395.4 704.0,398.0 C709.6,400.6 718.8,405.5 725.7,407.8 C732.7,410.1 738.2,409.1 745.7,412.0 C753.2,414.9 763.2,419.5 770.7,425.3 C778.2,431.1 785.7,439.5 790.7,447.0 C795.7,454.5 798.6,462.8 800.7,470.3 C802.8,477.8 804.0,484.2 803.2,492.0 C802.4,499.8 799.7,509.8 795.7,517.0 C791.7,524.2 786.0,530.0 779.0,535.3 C772.0,540.6 762.9,545.8 754.0,548.7 C745.1,551.6 734.0,552.4 725.7,552.8 C717.4,553.2 711.8,552.7 704.0,551.2 C696.2,549.7 686.8,547.2 679.0,543.7 C671.2,540.2 663.4,535.0 657.3,530.3 C651.2,525.6 646.7,521.1 642.3,515.3 C637.9,509.5 634.3,501.1 630.7,495.3 C627.1,489.5 625.2,484.7 620.7,480.3 C616.2,475.9 611.0,471.6 604.0,468.7 C597.0,465.8 586.5,464.0 579.0,462.8 C571.5,461.5 566.5,461.1 559.0,461.2 C551.5,461.4 541.0,462.2 534.0,463.7 C527.0,465.2 522.8,467.2 517.3,470.3 C511.8,473.3 507.6,478.4 500.7,482.0 C493.8,485.6 484.0,489.6 475.7,492.0 C467.4,494.4 459.4,496.2 450.7,496.4 C441.9,496.6 431.8,495.4 423.2,493.4 C414.6,491.4 405.7,488.3 398.8,484.2 C391.9,480.1 386.2,474.2 381.9,468.9 C377.6,463.5 375.0,458.5 372.8,452.1 C370.6,445.7 369.2,437.1 368.9,430.7 C368.6,424.3 369.3,419.8 371.2,413.9 C373.1,408.0 375.5,401.6 380.4,395.5 C385.2,389.4 392.4,382.3 400.3,377.2 C408.2,372.1 417.4,367.8 427.8,364.9 C438.2,362.0 455.0,360.2 463.0,359.6 C471.0,359.0 469.4,360.7 475.7,361.2 C482.0,361.7 492.4,363.2 500.7,362.8 C509.0,362.4 517.9,361.5 525.7,358.7 C533.5,355.9 541.6,350.3 547.3,345.9 C553.0,341.4 557.0,336.6 559.8,332.0 C562.6,327.4 563.6,323.2 564.0,318.1 C564.4,313.0 561.4,308.1 561.9,301.4 C562.4,294.7 563.7,284.3 566.8,277.8 C569.9,271.3 574.9,267.0 580.7,262.6 C586.5,258.2 591.8,254.1 601.5,251.4 C611.2,248.7 627.4,246.8 639.0,246.6Z" fill="#fff" filter="url(#bevel)"/>
<filter id="rim" x="-5%" y="-5%" width="110%" height="110%">
 <feOffset in="SourceAlpha" dx="-2" dy="-0.6" result="off"/>
 <feComposite in="SourceAlpha" in2="off" operator="out" result="rim"/>
 <feGaussianBlur in="rim" stdDeviation="0.6" result="rb"/>
 <feFlood flood-color="#2a2a2a" flood-opacity="0.75"/>
 <feComposite in2="rb" operator="in" result="dark"/>
 <feComposite in="dark" in2="SourceAlpha" operator="in"/>
</filter>
<path d="M639.0,246.6 C650.6,246.4 662.1,247.8 670.9,250.0 C679.7,252.2 686.0,255.9 691.8,259.8 C697.6,263.8 702.1,268.6 705.7,273.7 C709.3,278.8 711.9,285.2 713.3,290.3 C714.7,295.4 714.6,299.6 714.3,304.2 C713.9,308.8 713.1,313.5 711.2,318.1 C709.3,322.7 706.6,327.4 702.9,332.0 C699.2,336.6 692.9,341.7 689.0,345.9 C685.1,350.1 681.1,353.3 679.3,357.0 C677.4,360.7 677.7,363.9 677.9,368.1 C678.1,372.3 678.3,378.0 680.7,382.0 C683.1,386.0 688.4,389.3 692.3,392.0 C696.2,394.7 698.4,395.4 704.0,398.0 C709.6,400.6 718.8,405.5 725.7,407.8 C732.7,410.1 738.2,409.1 745.7,412.0 C753.2,414.9 763.2,419.5 770.7,425.3 C778.2,431.1 785.7,439.5 790.7,447.0 C795.7,454.5 798.6,462.8 800.7,470.3 C802.8,477.8 804.0,484.2 803.2,492.0 C802.4,499.8 799.7,509.8 795.7,517.0 C791.7,524.2 786.0,530.0 779.0,535.3 C772.0,540.6 762.9,545.8 754.0,548.7 C745.1,551.6 734.0,552.4 725.7,552.8 C717.4,553.2 711.8,552.7 704.0,551.2 C696.2,549.7 686.8,547.2 679.0,543.7 C671.2,540.2 663.4,535.0 657.3,530.3 C651.2,525.6 646.7,521.1 642.3,515.3 C637.9,509.5 634.3,501.1 630.7,495.3 C627.1,489.5 625.2,484.7 620.7,480.3 C616.2,475.9 611.0,471.6 604.0,468.7 C597.0,465.8 586.5,464.0 579.0,462.8 C571.5,461.5 566.5,461.1 559.0,461.2 C551.5,461.4 541.0,462.2 534.0,463.7 C527.0,465.2 522.8,467.2 517.3,470.3 C511.8,473.3 507.6,478.4 500.7,482.0 C493.8,485.6 484.0,489.6 475.7,492.0 C467.4,494.4 459.4,496.2 450.7,496.4 C441.9,496.6 431.8,495.4 423.2,493.4 C414.6,491.4 405.7,488.3 398.8,484.2 C391.9,480.1 386.2,474.2 381.9,468.9 C377.6,463.5 375.0,458.5 372.8,452.1 C370.6,445.7 369.2,437.1 368.9,430.7 C368.6,424.3 369.3,419.8 371.2,413.9 C373.1,408.0 375.5,401.6 380.4,395.5 C385.2,389.4 392.4,382.3 400.3,377.2 C408.2,372.1 417.4,367.8 427.8,364.9 C438.2,362.0 455.0,360.2 463.0,359.6 C471.0,359.0 469.4,360.7 475.7,361.2 C482.0,361.7 492.4,363.2 500.7,362.8 C509.0,362.4 517.9,361.5 525.7,358.7 C533.5,355.9 541.6,350.3 547.3,345.9 C553.0,341.4 557.0,336.6 559.8,332.0 C562.6,327.4 563.6,323.2 564.0,318.1 C564.4,313.0 561.4,308.1 561.9,301.4 C562.4,294.7 563.7,284.3 566.8,277.8 C569.9,271.3 574.9,267.0 580.7,262.6 C586.5,258.2 591.8,254.1 601.5,251.4 C611.2,248.7 627.4,246.8 639.0,246.6Z" fill="#000" filter="url(#rim)"/>
<g transform="translate(-41,-108)">
 <!-- center cap -->
 <clipPath id="capclip"><ellipse cx="642.5" cy="492.3" rx="65" ry="45.3"/></clipPath>
 <linearGradient id="capring" x1="0.2" y1="0" x2="0.1" y2="1"><stop offset="0" stop-color="#b4b4b4"/><stop offset="0.45" stop-color="#d6d6d6"/><stop offset="0.75" stop-color="#e6e6e6"/><stop offset="1" stop-color="#fafafa"/></linearGradient>
 <filter id="capblur" x="-10%" y="-10%" width="120%" height="120%"><feGaussianBlur stdDeviation="2.5"/></filter>
 <g clip-path="url(#capclip)">
  <rect x="570" y="440" width="150" height="110" fill="#d8d8d8"/>
  <ellipse cx="642.5" cy="492.3" rx="61" ry="41.5" fill="none" stroke="url(#capring)" stroke-width="11" filter="url(#capblur)"/>
 </g>
 <ellipse cx="642.5" cy="492.3" rx="65" ry="45.3" fill="none" stroke="#e0252e" stroke-width="2"/>
 <!-- rings -->
<clipPath id="hc1"><ellipse cx="678.6" cy="397.8" rx="28.4" ry="18.4"/></clipPath>
 <g transform="rotate(1 678.6 397.8)">
  <ellipse cx="678.8" cy="398.5" rx="60.5" ry="38.8" fill="#f4f4f4" stroke="#7a7a7a" stroke-width="0.8"/>
  <ellipse cx="678.8" cy="398.5" rx="58.9" ry="37.4" fill="none" stroke="#ffffff" stroke-width="1.2"/>
  <ellipse cx="678.3" cy="398.3" rx="57.7" ry="36.7" fill="none" stroke="#c8c8c8" stroke-width="0.8"/>
  <ellipse cx="678.3" cy="398.3" rx="56.5" ry="35.6" fill="#96323a"/>
  <ellipse cx="678.6" cy="397.8" rx="32" ry="21.4" fill="#f8f8f8" stroke="#8a2a30" stroke-width="0.6"/>
  <g clip-path="url(#hc1)">
   <rect x="650.2" y="379.40000000000003" width="56.8" height="36.8" fill="url(#holeg)"/>
   <ellipse cx="678.6" cy="422.8" rx="28.4" ry="18.4" fill="#d9d9d9"/>
   <ellipse cx="678.6" cy="422.8" rx="28.4" ry="18.4" fill="none" stroke="#909090" stroke-width="0.6" stroke-dasharray="2 1.5"/>
  </g>
  <ellipse cx="678.6" cy="397.8" rx="28.4" ry="18.4" fill="none" stroke="#555" stroke-width="0.5" opacity="0.6"/>
 </g>
<clipPath id="hc2"><ellipse cx="495" cy="522" rx="32.199999999999996" ry="22.6"/></clipPath>
 <g transform="rotate(-8 495 522)">
  <ellipse cx="494.5" cy="523" rx="67" ry="48.5" fill="#f4f4f4" stroke="#7a7a7a" stroke-width="0.8"/>
  <ellipse cx="494.5" cy="523" rx="65.4" ry="47.1" fill="none" stroke="#ffffff" stroke-width="1.2"/>
  <ellipse cx="494.4" cy="522.8" rx="62.7" ry="45.4" fill="none" stroke="#c8c8c8" stroke-width="0.8"/>
  <ellipse cx="494.4" cy="522.8" rx="61.5" ry="44.3" fill="#96323a"/>
  <ellipse cx="495" cy="522" rx="35.8" ry="25.6" fill="#f8f8f8" stroke="#8a2a30" stroke-width="0.6"/>
  <g clip-path="url(#hc2)">
   <rect x="462.8" y="499.4" width="64.39999999999999" height="45.2" fill="url(#holeg)"/>
   <ellipse cx="495" cy="549" rx="32.199999999999996" ry="22.6" fill="#d9d9d9"/>
   <ellipse cx="495" cy="549" rx="32.199999999999996" ry="22.6" fill="none" stroke="#909090" stroke-width="0.6" stroke-dasharray="2 1.5"/>
  </g>
  <ellipse cx="495" cy="522" rx="32.199999999999996" ry="22.6" fill="none" stroke="#555" stroke-width="0.5" opacity="0.6"/>
 </g>
<clipPath id="hc3"><ellipse cx="755.8" cy="572.6" rx="33.1" ry="25.2"/></clipPath>
 <g transform="rotate(6 755.8 572.6)">
  <ellipse cx="756.5" cy="573" rx="69.5" ry="51.5" fill="#f4f4f4" stroke="#7a7a7a" stroke-width="0.8"/>
  <ellipse cx="756.5" cy="573" rx="67.9" ry="50.1" fill="none" stroke="#ffffff" stroke-width="1.2"/>
  <ellipse cx="755.8" cy="574" rx="65.5" ry="48.6" fill="none" stroke="#c8c8c8" stroke-width="0.8"/>
  <ellipse cx="755.8" cy="574" rx="64.3" ry="47.5" fill="#96323a"/>
  <ellipse cx="755.8" cy="572.6" rx="36.7" ry="28.2" fill="#f8f8f8" stroke="#8a2a30" stroke-width="0.6"/>
  <g clip-path="url(#hc3)">
   <rect x="722.6999999999999" y="547.4" width="66.2" height="50.4" fill="url(#holeg)"/>
   <ellipse cx="755.8" cy="599.6" rx="33.1" ry="25.2" fill="#d9d9d9"/>
   <ellipse cx="755.8" cy="599.6" rx="33.1" ry="25.2" fill="none" stroke="#909090" stroke-width="0.6" stroke-dasharray="2 1.5"/>
  </g>
  <ellipse cx="755.8" cy="572.6" rx="33.1" ry="25.2" fill="none" stroke="#555" stroke-width="0.5" opacity="0.6"/>
 </g>
 <g fill="#222"><rect x="599" y="594" width="2" height="2"/><rect x="774" y="461" width="2.5" height="2"/><rect x="867" y="648" width="2" height="1.6"/></g>
 <!-- green y axis -->
 <line x1="633.2" y1="108" x2="637.6" y2="470" stroke="#1f9a1f" stroke-width="1.2"/>
 <line x1="637.6" y1="470" x2="637.8" y2="484" stroke="#7cc07c" stroke-width="1.2"/>
</g>
</svg>
</div>



<svg class="a" style="left:0px;top:1px" width="20" height="19" viewBox="0 0 20 19"><defs><radialGradient id="c4dr" cx="0.5" cy="0.5" r="0.5"><stop offset="0.6" stop-color="#fff"/><stop offset="0.8" stop-color="#d0d0d8"/><stop offset="1" stop-color="#9a9aa8"/></radialGradient><radialGradient id="c4dc" cx="0.42" cy="0.55" r="0.6"><stop offset="0" stop-color="#9ab8ff"/><stop offset="0.3" stop-color="#3a4ac0"/><stop offset="0.7" stop-color="#141450"/><stop offset="1" stop-color="#000010"/></radialGradient></defs><circle cx="10" cy="10" r="8" fill="url(#c4dr)"/><path d="M4,12 C3,7 8,4 13,5 L16,7 C17,12 13,16 8,16 C6,15.5 4.5,14 4,12Z" fill="url(#c4dc)"/><path d="M4.5,13 C6,15.5 9,16.5 12,15.5" stroke="#6a6af0" stroke-width="1" fill="none" opacity="0.7"/></svg><svg class="a" style="left:1790px;top:0" width="130" height="23" viewBox="0 0 130 23"><path d="M9.5,10.5 h10" stroke="#111" stroke-width="1"/><rect x="55.5" y="7.5" width="8" height="8" fill="none" stroke="#111" stroke-width="1"/><path d="M57.5,7.5 v-2 h8 v8 h-2" fill="none" stroke="#111" stroke-width="1"/><path d="M100,5 L110,15 M110,5 L100,15" stroke="#111" stroke-width="1.1"/></svg><div class="a" style="left:1764px;top:25px;width:133px;height:16px;background:linear-gradient(#606060,#545454);border-radius:3px;border:1px solid #3a3a3a"></div><div class="t" style="left:1771px;top:26px;color:#d0d0d0;font-size:11px">Start</div><svg class="a" style="left:1883px;top:31px" width="9" height="5" viewBox="0 0 9 5"><path d="M0,0 L9,0 L4.5,4.5Z" fill="#d8d8d8"/></svg><svg class="a" style="left:1903px;top:26px" width="16" height="16" viewBox="0 0 16 16"><circle cx="6" cy="6" r="4" fill="none" stroke="#111" stroke-width="1.5"/><path d="M9,9 L14,14" stroke="#111" stroke-width="2"/></svg><svg class="a" style="left:1198px;top:88px" width="68" height="20" viewBox="0 0 68 20"><path d="M8.5,3 L10.5,6 L6.5,6Z M8.5,17 L10.5,14 L6.5,14Z M2,10 L5,8 L5,12Z M15,10 L12,8 L12,12Z" fill="#151515"/><path d="M8.5,6 v8 M5,10 h7" stroke="#151515" stroke-width="1"/><path d="M25,3 L29,8 L26.5,8 L26.5,12 L29,12 L25,17 L21,12 L23.5,12 L23.5,8 L21,8Z" fill="#151515"/><path d="M36,7 A6,6 0 0 1 46,6 M46,13 A6,6 0 0 1 36,14" fill="none" stroke="#151515" stroke-width="1.8"/><circle cx="41" cy="10" r="1.2" fill="#151515"/><path d="M45,3 l2,3 l-3,0Z M37,17 l-2,-3 l3,0Z" fill="#151515"/><rect x="53.5" y="3.5" width="11" height="13" rx="1" fill="none" stroke="#151515" stroke-width="1.2"/><rect x="53.5" y="3.5" width="11" height="2" fill="#151515"/><path d="M53.5,10.5 h5 v6" fill="none" stroke="#151515" stroke-width="1"/></svg><svg class="a" style="left:45px;top:92px" width="12" height="12"><rect width="12" height="12" fill="url(#hp)"/></svg><div class="a" style="left:43px;top:111px;width:99px;height:15px;background:rgba(110,110,110,0.55);border-radius:3px"></div><div class="t" style="left:45px;top:112px;color:#ececec;font-size:11px;line-height:13px">Zentralperspektive</div><div class="a" style="left:82px;top:118px;width:15px;height:21px;border:3px solid #76b900"></div><div class="a" style="left:1154px;top:854px;width:108px;height:15px;background:rgba(130,130,130,0.6);border-radius:3px"></div><div class="t" style="left:1156px;top:855px;color:#bdbdbd;font-size:11px;line-height:13px">Rasterweite : 10 cm</div><svg class="a" style="left:50px;top:812px" width="50" height="30" viewBox="0 0 50 30"><path d="M24.5,26 L17,20.5" stroke="#2030e0" stroke-width="1.2"/><path d="M24.5,26 L24.5,15" stroke="#20c020" stroke-width="1.2"/><path d="M24.5,26 L37.5,20" stroke="#e02020" stroke-width="1.2"/><text x="7" y="19" font-family="Liberation Sans" font-size="10" fill="#2030e0">Z</text><text x="20.5" y="11" font-family="Liberation Sans" font-size="10" fill="#30c030">Y</text><text x="40" y="19" font-family="Liberation Sans" font-size="10" fill="#e04040">X</text></svg></body></html>
